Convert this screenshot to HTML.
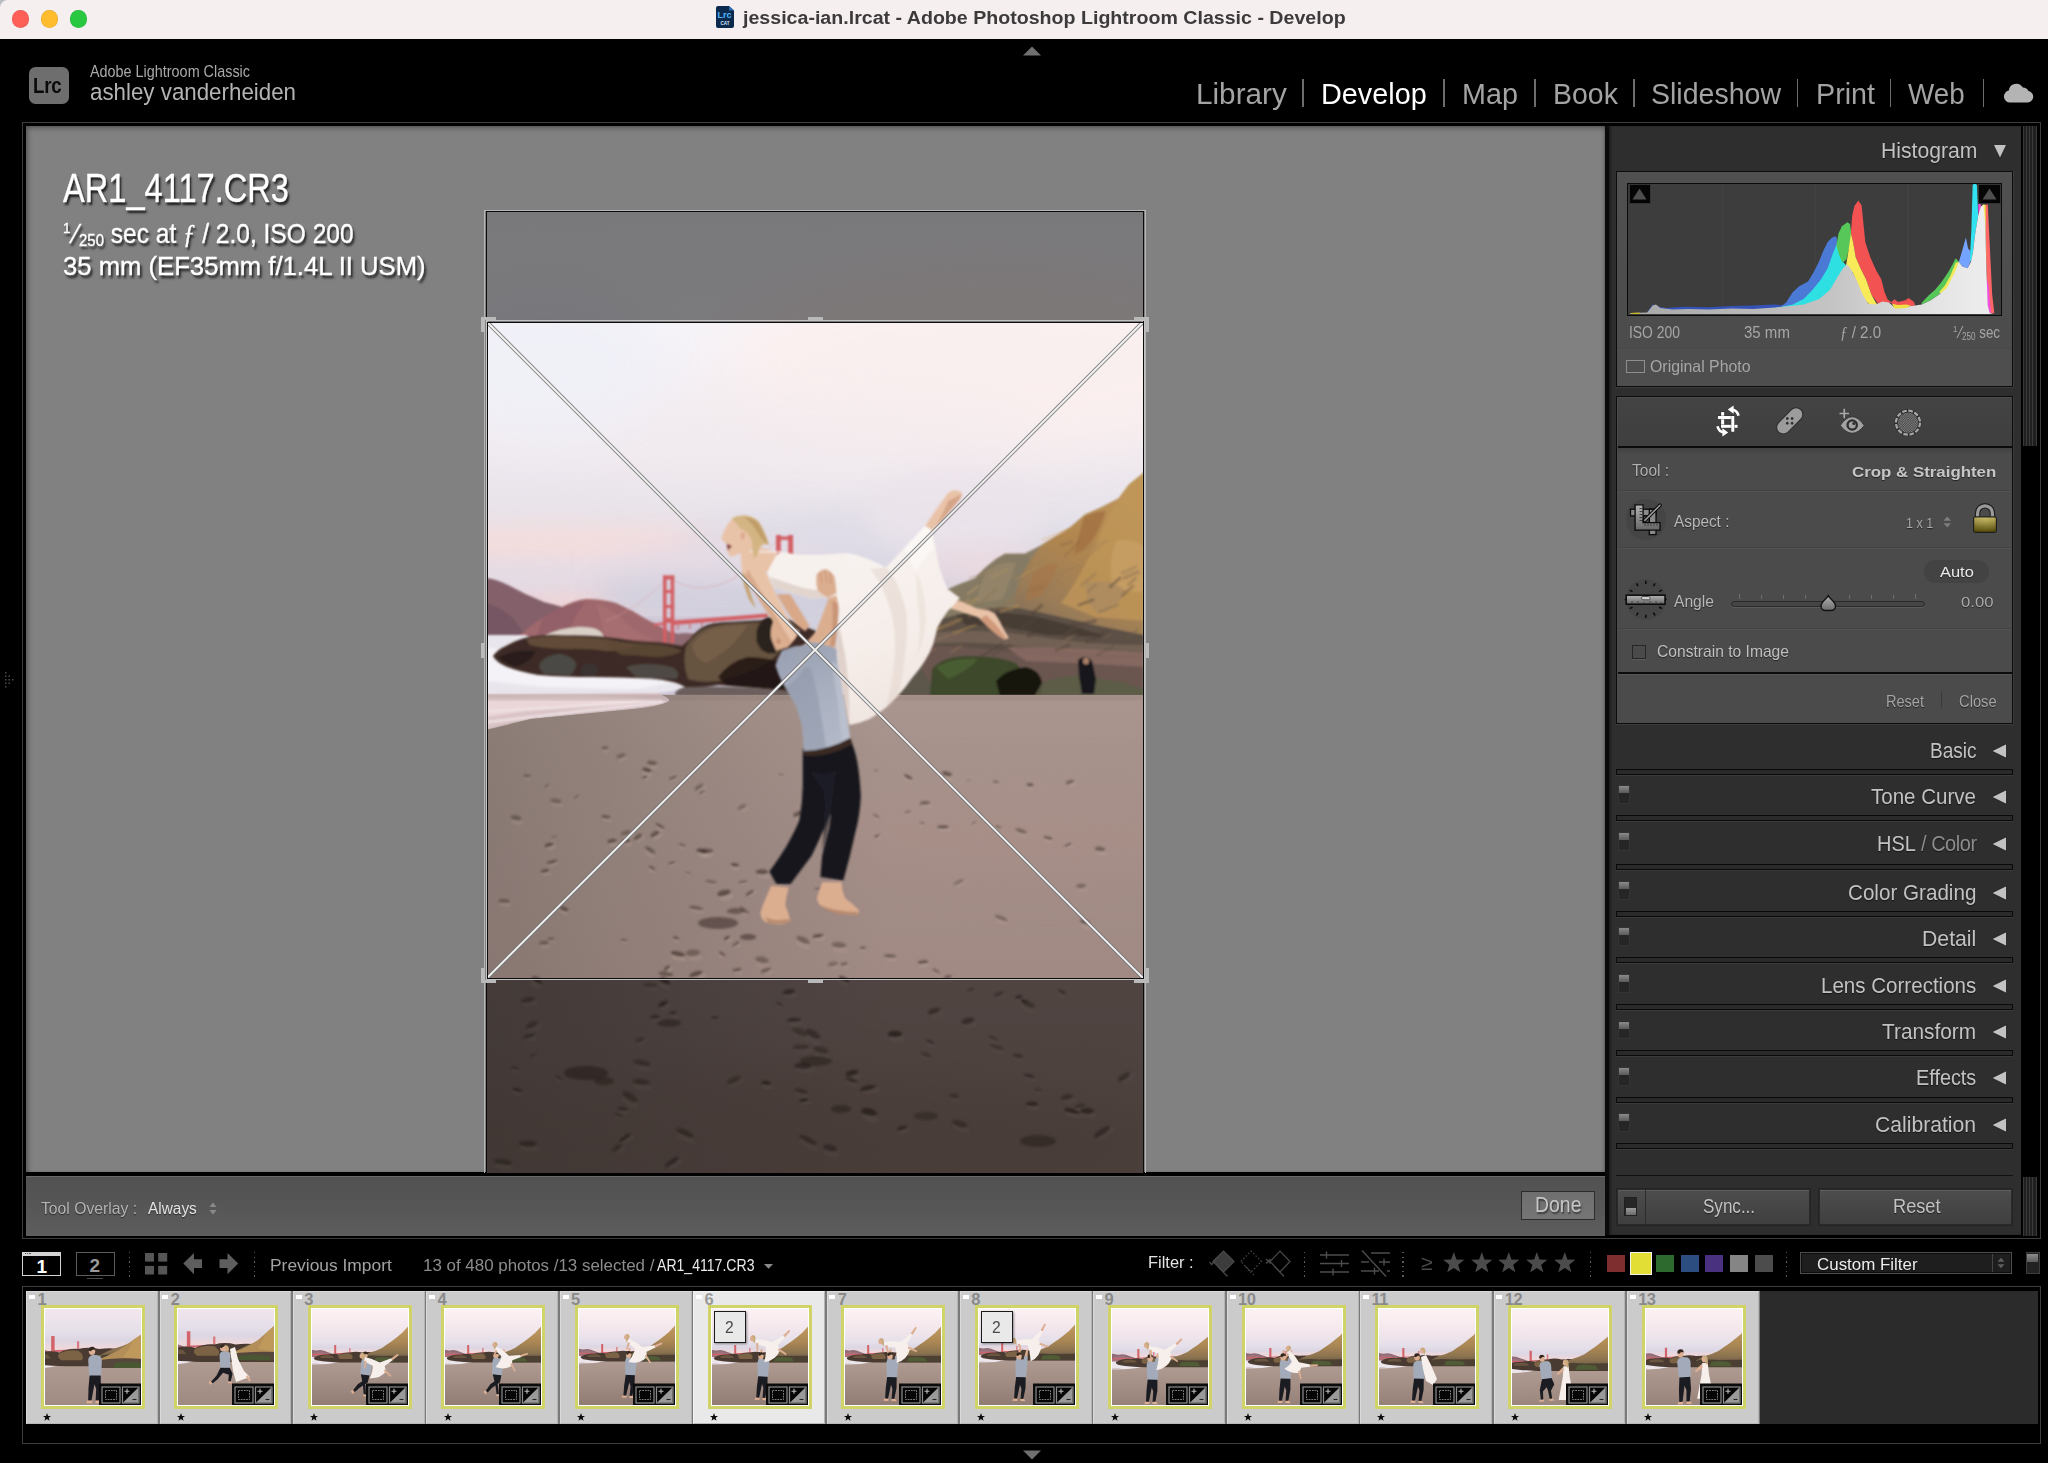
<!DOCTYPE html>
<html><head><meta charset="utf-8"><title>Lightroom Classic - Develop</title>
<style>
html,body{margin:0;padding:0;background:#000;}
#root{position:relative;width:2048px;height:1463px;overflow:hidden;background:#000;font-family:'Liberation Sans',sans-serif;}
.a{position:absolute;box-sizing:border-box;}
.t{position:absolute;white-space:pre;line-height:1;transform-origin:0 0;font-family:'Liberation Sans',sans-serif;}
svg{position:absolute;overflow:visible;}

</style></head>
<body>
<div id="root">
<!-- ===== Title bar ===== -->
<div class="a" style="left:0;top:0;width:2048px;height:39px;background:#f5eff0;"></div>
<div class="a" style="left:0;top:0;width:8px;height:8px;background:radial-gradient(circle at 8px 8px,#f5eff0 7.5px,#b9bcbf 8.5px);"></div>
<div class="a" style="left:11.7px;top:10.3px;width:17.4px;height:17.4px;border-radius:50%;background:#fe5f57;box-shadow:inset 0 0 0 .5px rgba(0,0,0,.12)"></div>
<div class="a" style="left:40.5px;top:10.3px;width:17.4px;height:17.4px;border-radius:50%;background:#febc2e;box-shadow:inset 0 0 0 .5px rgba(0,0,0,.12)"></div>
<div class="a" style="left:69.6px;top:10.3px;width:17.4px;height:17.4px;border-radius:50%;background:#28c840;box-shadow:inset 0 0 0 .5px rgba(0,0,0,.12)"></div>
<!-- catalog file icon -->
<svg style="left:716px;top:6px" width="18" height="22" viewBox="0 0 18 22"><path d="M2 0h11l5 4.5V20a2 2 0 0 1-2 2H2a2 2 0 0 1-2-2V2a2 2 0 0 1 2-2z" fill="#0b2a4d"/><path d="M13 0l5 4.500h-5z" fill="#2f6fb0"/><text x="1.600" y="11.500" font-family="Liberation Sans" font-weight="700" font-size="8.500" fill="#4fb4ff" textLength="14" lengthAdjust="spacingAndGlyphs">Lrc</text><text x="4.500" y="18.500" font-family="Liberation Sans" font-weight="700" font-size="4.500" fill="#d8ecff" textLength="9" lengthAdjust="spacingAndGlyphs">CAT</text></svg>

<!-- top collapse arrow -->
<svg style="left:1023px;top:45.500px" width="18" height="10" viewBox="0 0 18 10"><path d="M0 9.500L9 0.500L18 9.500z" fill="#707070"/></svg>
<!-- bottom collapse arrow -->
<svg style="left:1023px;top:1450px" width="18" height="10" viewBox="0 0 18 10"><path d="M0 0.500L9 9.500L18 0.500z" fill="#707070"/></svg>
<!-- left grip -->
<svg style="left:4px;top:671px" width="10" height="20" viewBox="0 0 10 20"><g fill="#4a4a4a"><rect x="1" y="1" width="1.500" height="1.500"/><rect x="1" y="4.500" width="1.500" height="1.500"/><rect x="1" y="8" width="1.500" height="1.500"/><rect x="1" y="11.500" width="1.500" height="1.500"/><rect x="1" y="15" width="1.500" height="1.500"/><rect x="4.500" y="4.500" width="1.500" height="1.500"/><rect x="4.500" y="8" width="1.500" height="1.500"/><rect x="4.500" y="11.500" width="1.500" height="1.500"/><rect x="8" y="8" width="1.500" height="1.500"/></g></svg>

<!-- Lrc logo -->
<div class="a" style="left:29px;top:66.800px;width:39.700px;height:37.700px;border-radius:6.500px;background:#6e6e6e;"></div>
<span class="t" style="left:33.200px;top:74.500px;font-size:22.500px;font-weight:700;color:#0a0a0a;transform:scaleX(.83);letter-spacing:-.3px">Lrc</span>

<!-- nav separators -->
<div class="a" style="left:1302.400px;top:79px;width:1.600px;height:27.500px;background:#6c6c6c"></div>
<div class="a" style="left:1443px;top:79px;width:1.600px;height:27.500px;background:#6c6c6c"></div>
<div class="a" style="left:1534.100px;top:79px;width:1.600px;height:27.500px;background:#6c6c6c"></div>
<div class="a" style="left:1633px;top:79px;width:1.600px;height:27.500px;background:#6c6c6c"></div>
<div class="a" style="left:1796.900px;top:79px;width:1.600px;height:27.500px;background:#6c6c6c"></div>
<div class="a" style="left:1889.700px;top:79px;width:1.600px;height:27.500px;background:#6c6c6c"></div>
<div class="a" style="left:1982.700px;top:79px;width:1.600px;height:27.500px;background:#6c6c6c"></div>
<!-- cloud -->
<svg style="left:2003px;top:83px" width="31" height="20" viewBox="0 0 31 20"><path d="M7 19.500a6 6 0 0 1-1.200-11.900A7.500 7.500 0 0 1 19.800 4.500 6.200 6.200 0 0 1 25.500 8a5.800 5.800 0 0 1-.8 11.500z" fill="#b4b4b4"/></svg>

<!-- ===== outer frame (upper) ===== -->
<div class="a" style="left:21.800px;top:121.600px;width:2019.200px;height:1117.400px;border:1.500px solid #3d3d3d;"></div>

<!-- ===== main view ===== -->
<div class="a" id="mainview" style="left:25.600px;top:125.700px;width:1579.700px;height:1046.800px;background:#818181;box-shadow:inset 3px 3px 5px -1px rgba(0,0,0,.35), inset -2px 0 3px -1px rgba(0,0,0,.25);"></div>

<!-- ===== toolbar ===== -->
<div class="a" style="left:25.600px;top:1175.800px;width:1579.700px;height:59.800px;background:linear-gradient(#525252,#565656 50%,#5d5d5d);border-top:1.500px solid #6a6a6a;"></div>
<!-- Always stepper -->
<svg style="left:208.500px;top:1202px" width="8" height="13" viewBox="0 0 8 13"><path d="M0.500 5L4 0.500L7.500 5zM0.500 8L4 12.500L7.500 8z" fill="#8a8a8a"/></svg>
<!-- Done button -->
<div class="a" style="left:1520.700px;top:1191.300px;width:74.300px;height:28.500px;background:linear-gradient(#6f6f6f,#757575);border:1.500px solid #2c2c2c;"></div>

<!-- ===== right panel ===== -->
<div class="a" style="left:1605.300px;top:125.700px;width:3.500px;height:1109.800px;background:#0a0a0a"></div>
<div class="a" style="left:1608.800px;top:125.700px;width:411.800px;height:1109.800px;background:#2e2e2e;box-shadow:inset 2px 0 2px rgba(0,0,0,.35);"></div>
<!-- scrollbar grip strips -->
<div class="a" style="left:2023.200px;top:126.300px;width:13.600px;height:320px;background:repeating-linear-gradient(90deg,#3a3a3a 0,#3a3a3a 1px,#202020 1px,#202020 3.150px);"></div>
<div class="a" style="left:2023.200px;top:1177px;width:13.600px;height:58.500px;background:repeating-linear-gradient(90deg,#3a3a3a 0,#3a3a3a 1px,#202020 1px,#202020 3.150px);"></div>

<!-- Histogram header triangle -->
<svg style="left:1992.500px;top:143.500px" width="14" height="15" viewBox="0 0 14 15"><path d="M0.300 0.500h13.400L7 14.500z" fill="#c2c2c2" stroke="#1c1c1c" stroke-width=".8"/></svg>

<!-- Histogram box -->
<div class="a" style="left:1616.300px;top:171.300px;width:397px;height:215.500px;background:linear-gradient(#505050,#4b4b4b);border:1.500px solid #0c0c0c;box-shadow:0 1px 0 #3c3c3c,1px 0 0 #3a3a3a;"></div>
<div class="a" style="left:1618px;top:347.500px;width:393.500px;height:1px;background:#484848"></div>
<div class="a" style="left:1618px;top:348.500px;width:393.500px;height:37px;background:#4e4e4e"></div>
<div class="a" id="histo" style="left:1627.300px;top:182.800px;width:374.600px;height:133.200px;background:#3d3d3d;border:1.500px solid #0a0a0a;overflow:hidden;"></div>
<!-- Original photo checkbox -->
<div class="a" style="left:1626px;top:360px;width:19px;height:12.800px;border:1.300px solid #8e8e8e;"></div>

<!-- Tool strip + tool panel box -->
<div class="a" style="left:1616.300px;top:396px;width:397px;height:328px;background:#4b4b4b;border:1.500px solid #0c0c0c;box-shadow:0 1px 0 #3c3c3c,1px 0 0 #3a3a3a;"></div>
<div class="a" style="left:1617.800px;top:397.500px;width:394px;height:48.500px;background:linear-gradient(#434343,#3f3f3f);"></div>
<div class="a" style="left:1617.800px;top:445.500px;width:394px;height:2px;background:#0c0c0c"></div>
<div class="a" style="left:1617.800px;top:447.500px;width:394px;height:6px;background:linear-gradient(#424242,#4b4b4b)"></div>
<!-- dividers -->
<div class="a" style="left:1617.800px;top:490px;width:394px;height:1px;background:#434343"></div><div class="a" style="left:1617.800px;top:491px;width:394px;height:1px;background:#525252"></div>
<div class="a" style="left:1617.800px;top:547.300px;width:394px;height:1px;background:#434343"></div><div class="a" style="left:1617.800px;top:548.300px;width:394px;height:1px;background:#525252"></div>
<div class="a" style="left:1617.800px;top:628px;width:394px;height:1px;background:#434343"></div><div class="a" style="left:1617.800px;top:629px;width:394px;height:1px;background:#525252"></div>
<div class="a" style="left:1617.800px;top:672.300px;width:394px;height:1.800px;background:#0c0c0c"></div><div class="a" style="left:1617.800px;top:674.100px;width:394px;height:1px;background:#555"></div>
<!-- icon circles -->
<div class="a" style="left:1625.500px;top:499.300px;width:40.500px;height:40.500px;border-radius:50%;background:#454545"></div>
<div class="a" style="left:1625.500px;top:579.300px;width:40.500px;height:40.500px;border-radius:50%;background:#454545"></div>
<!-- Auto pill -->
<div class="a" style="left:1923.700px;top:559.900px;width:65.800px;height:23.200px;border-radius:12px;background:#434343"></div>
<!-- constrain checkbox -->
<div class="a" style="left:1632px;top:644.600px;width:14px;height:14px;background:#4a4a4a;border:1.300px solid #262626;box-shadow:0 1px 0 #5a5a5a"></div>
<!-- reset|close sep -->
<div class="a" style="left:1940.800px;top:691px;width:1px;height:17px;background:#3a3a3a"></div>
<!-- aspect stepper -->
<svg style="left:1943px;top:516.300px" width="8.500" height="12" viewBox="0 0 8.500 12"><path d="M0.500 4.800L4.250 0.500L8 4.800zM0.500 7.200L4.250 11.500L8 7.200z" fill="#7e7e7e"/></svg>
<!-- slider -->
<div class="a" style="left:1730.600px;top:600.500px;width:194px;height:6px;border-radius:3px;background:#454545;border:1.200px solid #2a2a2a;box-shadow:0 1px 0 #5c5c5c"></div>
<div class="a" style="left:1738.9px;top:594px;width:1px;height:4.5px;background:#6e6e6e"></div>
<div class="a" style="left:1760.9px;top:595px;width:1px;height:3.5px;background:#6e6e6e"></div>
<div class="a" style="left:1782.8px;top:595px;width:1px;height:3.5px;background:#6e6e6e"></div>
<div class="a" style="left:1804.8px;top:595px;width:1px;height:3.5px;background:#6e6e6e"></div>
<div class="a" style="left:1848.8px;top:595px;width:1px;height:3.5px;background:#6e6e6e"></div>
<div class="a" style="left:1870.7px;top:595px;width:1px;height:3.5px;background:#6e6e6e"></div>
<div class="a" style="left:1892.7px;top:595px;width:1px;height:3.5px;background:#6e6e6e"></div>
<div class="a" style="left:1914.7px;top:594px;width:1px;height:4.5px;background:#6e6e6e"></div>
<svg style="left:1820px;top:594.500px" width="16.500" height="16.500" viewBox="0 0 16.500 16.500"><defs><linearGradient id="hg" x1="0" y1="0" x2="0" y2="1"><stop offset="0" stop-color="#b0b0b0"/><stop offset="1" stop-color="#6c6c6c"/></linearGradient></defs><path d="M8.250 0.800C9.500 3.800 15.500 6.500 15.500 11a4.500 4.500 0 0 1-4.500 4.500h-5.500A4.500 4.500 0 0 1 1 11C1 6.500 7 3.800 8.250 0.800z" fill="url(#hg)" stroke="#111" stroke-width="1.400"/></svg>
<div class="a" style="left:1616.300px;top:1174.500px;width:397px;height:1.200px;background:#111"></div>
<div class="a" style="left:1617px;top:1188.600px;width:193px;height:36.800px;background:linear-gradient(#4d4d4d,#3f3f3f);border:1px solid #2a2a2a;box-shadow:inset 0 1px 0 #5e5e5e,0 0 0 1px #242424;"></div>
<div class="a" style="left:1644.500px;top:1189.600px;width:1.500px;height:34.800px;background:#2c2c2c;"></div>
<div class="a" style="left:1624px;top:1196.500px;width:13px;height:19.500px;background:#262626;border:1px solid #202020;"></div>
<div class="a" style="left:1625.500px;top:1207.500px;width:10px;height:7px;background:linear-gradient(#9a9a9a,#6a6a6a);"></div>
<div class="a" style="left:1818.800px;top:1188.600px;width:193px;height:36.800px;background:linear-gradient(#4d4d4d,#3f3f3f);border:1px solid #2a2a2a;box-shadow:inset 0 1px 0 #5e5e5e,0 0 0 1px #242424;"></div>

<div class="a" style="left:1616.300px;top:768.6px;width:397px;height:6px;background:#2a2a2a;border:1.500px solid #0a0a0a;box-shadow:0 1px 0 #3a3a3a"></div>
<div class="a" style="left:1616.300px;top:815.2px;width:397px;height:6px;background:#2a2a2a;border:1.500px solid #0a0a0a;box-shadow:0 1px 0 #3a3a3a"></div>
<div class="a" style="left:1616.300px;top:864.4px;width:397px;height:6px;background:#2a2a2a;border:1.500px solid #0a0a0a;box-shadow:0 1px 0 #3a3a3a"></div>
<div class="a" style="left:1616.300px;top:911.0px;width:397px;height:6px;background:#2a2a2a;border:1.500px solid #0a0a0a;box-shadow:0 1px 0 #3a3a3a"></div>
<div class="a" style="left:1616.300px;top:957.4px;width:397px;height:6px;background:#2a2a2a;border:1.500px solid #0a0a0a;box-shadow:0 1px 0 #3a3a3a"></div>
<div class="a" style="left:1616.300px;top:1003.9px;width:397px;height:6px;background:#2a2a2a;border:1.500px solid #0a0a0a;box-shadow:0 1px 0 #3a3a3a"></div>
<div class="a" style="left:1616.300px;top:1050.3px;width:397px;height:6px;background:#2a2a2a;border:1.500px solid #0a0a0a;box-shadow:0 1px 0 #3a3a3a"></div>
<div class="a" style="left:1616.300px;top:1096.7px;width:397px;height:6px;background:#2a2a2a;border:1.500px solid #0a0a0a;box-shadow:0 1px 0 #3a3a3a"></div>
<div class="a" style="left:1616.300px;top:1142.9px;width:397px;height:6px;background:#2a2a2a;border:1.500px solid #0a0a0a;box-shadow:0 1px 0 #3a3a3a"></div>
<svg style="left:1991px;top:743.1px" width="16" height="16" viewBox="0 0 16 16"><path d="M15.500 0.700V15.300L0.700 8z" fill="#c2c2c2" stroke="#1c1c1c" stroke-width=".8"/></svg>
<svg style="left:1991px;top:788.6px" width="16" height="16" viewBox="0 0 16 16"><path d="M15.500 0.700V15.300L0.700 8z" fill="#c2c2c2" stroke="#1c1c1c" stroke-width=".8"/></svg>
<div class="a" style="left:1617.500px;top:785.0px;width:12.500px;height:19px;background:#262626;border:1px solid #343434;"></div>
<div class="a" style="left:1618.800px;top:786.2px;width:10px;height:7px;background:linear-gradient(#8a8a8a,#5a5a5a);"></div>
<svg style="left:1991px;top:835.5px" width="16" height="16" viewBox="0 0 16 16"><path d="M15.500 0.700V15.300L0.700 8z" fill="#c2c2c2" stroke="#1c1c1c" stroke-width=".8"/></svg>
<div class="a" style="left:1617.500px;top:831.9px;width:12.500px;height:19px;background:#262626;border:1px solid #343434;"></div>
<div class="a" style="left:1618.800px;top:833.1px;width:10px;height:7px;background:linear-gradient(#8a8a8a,#5a5a5a);"></div>
<svg style="left:1991px;top:884.6px" width="16" height="16" viewBox="0 0 16 16"><path d="M15.500 0.700V15.300L0.700 8z" fill="#c2c2c2" stroke="#1c1c1c" stroke-width=".8"/></svg>
<div class="a" style="left:1617.500px;top:881.0px;width:12.500px;height:19px;background:#262626;border:1px solid #343434;"></div>
<div class="a" style="left:1618.800px;top:882.2px;width:10px;height:7px;background:linear-gradient(#8a8a8a,#5a5a5a);"></div>
<svg style="left:1991px;top:930.8px" width="16" height="16" viewBox="0 0 16 16"><path d="M15.500 0.700V15.300L0.700 8z" fill="#c2c2c2" stroke="#1c1c1c" stroke-width=".8"/></svg>
<div class="a" style="left:1617.500px;top:927.2px;width:12.500px;height:19px;background:#262626;border:1px solid #343434;"></div>
<div class="a" style="left:1618.800px;top:928.4px;width:10px;height:7px;background:linear-gradient(#8a8a8a,#5a5a5a);"></div>
<svg style="left:1991px;top:977.5px" width="16" height="16" viewBox="0 0 16 16"><path d="M15.500 0.700V15.300L0.700 8z" fill="#c2c2c2" stroke="#1c1c1c" stroke-width=".8"/></svg>
<div class="a" style="left:1617.500px;top:973.9px;width:12.500px;height:19px;background:#262626;border:1px solid #343434;"></div>
<div class="a" style="left:1618.800px;top:975.1px;width:10px;height:7px;background:linear-gradient(#8a8a8a,#5a5a5a);"></div>
<svg style="left:1991px;top:1024.0px" width="16" height="16" viewBox="0 0 16 16"><path d="M15.500 0.700V15.300L0.700 8z" fill="#c2c2c2" stroke="#1c1c1c" stroke-width=".8"/></svg>
<div class="a" style="left:1617.500px;top:1020.4px;width:12.500px;height:19px;background:#262626;border:1px solid #343434;"></div>
<div class="a" style="left:1618.800px;top:1021.6px;width:10px;height:7px;background:linear-gradient(#8a8a8a,#5a5a5a);"></div>
<svg style="left:1991px;top:1070.3px" width="16" height="16" viewBox="0 0 16 16"><path d="M15.500 0.700V15.300L0.700 8z" fill="#c2c2c2" stroke="#1c1c1c" stroke-width=".8"/></svg>
<div class="a" style="left:1617.500px;top:1066.7px;width:12.500px;height:19px;background:#262626;border:1px solid #343434;"></div>
<div class="a" style="left:1618.800px;top:1067.9px;width:10px;height:7px;background:linear-gradient(#8a8a8a,#5a5a5a);"></div>
<svg style="left:1991px;top:1116.6px" width="16" height="16" viewBox="0 0 16 16"><path d="M15.500 0.700V15.300L0.700 8z" fill="#c2c2c2" stroke="#1c1c1c" stroke-width=".8"/></svg>
<div class="a" style="left:1617.500px;top:1113.0px;width:12.500px;height:19px;background:#262626;border:1px solid #343434;"></div>
<div class="a" style="left:1618.800px;top:1114.2px;width:10px;height:7px;background:linear-gradient(#8a8a8a,#5a5a5a);"></div>

<svg id="photo" style="left:486px;top:211px;overflow:hidden" width="658" height="961.500" viewBox="0 0 658 961.500">
<defs>
<linearGradient id="sky" gradientUnits="userSpaceOnUse" x1="0" y1="0" x2="0" y2="485">
<stop offset="0" stop-color="#f3f2f8"/><stop offset=".23" stop-color="#f6f4f8"/><stop offset=".42" stop-color="#f3edf1"/><stop offset=".6" stop-color="#e9e4eb"/><stop offset=".74" stop-color="#e0dde7"/><stop offset=".86" stop-color="#d5d2de"/><stop offset="1" stop-color="#cac4d3"/></linearGradient>
<linearGradient id="sand" gradientUnits="userSpaceOnUse" x1="0" y1="480" x2="0" y2="990">
<stop offset="0" stop-color="#aa968f"/><stop offset=".12" stop-color="#a6928b"/><stop offset=".35" stop-color="#a38d87"/><stop offset=".6" stop-color="#a08983"/><stop offset="1" stop-color="#977f78"/></linearGradient>
<linearGradient id="cliff" gradientUnits="userSpaceOnUse" x1="640" y1="270" x2="520" y2="470">
<stop offset="0" stop-color="#c0965a"/><stop offset=".35" stop-color="#b0864f"/><stop offset=".6" stop-color="#9a7c58"/><stop offset=".8" stop-color="#7d6c5c"/><stop offset="1" stop-color="#5f5448"/></linearGradient>
<linearGradient id="dress" gradientUnits="userSpaceOnUse" x1="350" y1="340" x2="420" y2="520">
<stop offset="0" stop-color="#f8f3f0"/><stop offset=".5" stop-color="#f6eeea"/><stop offset="1" stop-color="#efe3de"/></linearGradient>
<linearGradient id="shirt" gradientUnits="userSpaceOnUse" x1="300" y1="440" x2="350" y2="540">
<stop offset="0" stop-color="#9aa1b2"/><stop offset=".5" stop-color="#a9b0c0"/><stop offset="1" stop-color="#b3b9c8"/></linearGradient>
<linearGradient id="lsh" gradientUnits="userSpaceOnUse" x1="0" y1="0" x2="400" y2="0"><stop offset="0" stop-color="#6f645f" stop-opacity=".5"/><stop offset=".45" stop-color="#6f645f" stop-opacity=".28"/><stop offset="1" stop-color="#6f645f" stop-opacity="0"/></linearGradient>
<filter id="b1" x="-5%" y="-5%" width="110%" height="110%"><feGaussianBlur stdDeviation="1"/></filter>
<filter id="b2" x="-10%" y="-10%" width="120%" height="120%"><feGaussianBlur stdDeviation="2.200"/></filter>
<filter id="b5" x="-20%" y="-20%" width="140%" height="140%"><feGaussianBlur stdDeviation="6"/></filter>
<filter id="b14" x="-60%" y="-100%" width="220%" height="300%"><feGaussianBlur stdDeviation="14"/></filter>
<filter id="b25" x="-100%" y="-100%" width="300%" height="300%"><feGaussianBlur stdDeviation="26"/></filter>
</defs>
<rect x="0" y="0" width="658" height="490" fill="url(#sky)"/>
<g>
<ellipse cx="500" cy="150" rx="260" ry="95" fill="#fcefee" opacity=".8" filter="url(#b25)"/>
<ellipse cx="330" cy="225" rx="230" ry="45" fill="#f3ebee" opacity=".6" filter="url(#b25)"/>
<ellipse cx="60" cy="150" rx="120" ry="80" fill="#f0f0f8" opacity=".9" filter="url(#b25)"/>
<ellipse cx="70" cy="335" rx="190" ry="20" fill="#f8dcd9" opacity=".9" filter="url(#b14)"/>
<ellipse cx="110" cy="395" rx="170" ry="16" fill="#f5d3d3" opacity=".95" filter="url(#b14)"/>
<ellipse cx="40" cy="362" rx="120" ry="12" fill="#e4dbe6" opacity=".8" filter="url(#b14)"/>
<ellipse cx="340" cy="385" rx="230" ry="48" fill="#d2d0de" opacity=".95" filter="url(#b14)"/>
<ellipse cx="400" cy="330" rx="200" ry="30" fill="#dedbe6" opacity=".8" filter="url(#b14)"/>
<ellipse cx="230" cy="350" rx="120" ry="18" fill="#e9dde6" opacity=".7" filter="url(#b14)"/>
<ellipse cx="470" cy="300" rx="90" ry="45" fill="#ece4eb" opacity=".8" filter="url(#b14)"/>
<ellipse cx="500" cy="355" rx="70" ry="16" fill="#f1d9de" opacity=".8" filter="url(#b14)"/>
<ellipse cx="180" cy="418" rx="130" ry="9" fill="#c4b8cc" opacity=".8" filter="url(#b5)"/>
</g>
<g filter="url(#b1)">
<path d="M0 367Q10 368 22 374Q40 384 58 391Q70 394 80 397L96 402L120 430H0z" fill="#84616a"/>
<path d="M0 392Q14 396 26 406Q34 416 40 426L0 428z" fill="#765762"/>
<path d="M34 424Q52 408 72 398Q88 389 100 388Q116 388 130 392Q146 399 160 408Q172 414 182 420Q196 424 214 430L214 440H34z" fill="#9f676c"/>
<path d="M58 404Q84 392 100 390Q92 400 84 416Q70 420 50 428z" fill="#8e5c66" opacity=".7"/>
<path d="M110 392Q128 398 140 412Q150 422 170 428L120 430z" fill="#ac7472" opacity=".55"/>
<path d="M186 424Q206 418 226 430L226 440H186z" fill="#8e6a72"/>
<path d="M60 424Q74 417 92 416Q110 415 116 422L118 428H60z" fill="#d8cfc6"/>
</g>
<g filter="url(#b1)" fill="#d25e63">
<path d="M150 417Q200 330 181 366" fill="none"/>
<path d="M182.500 366Q230 400 290 330" fill="none" stroke="#dba0a8" stroke-width="1" opacity=".6"/>
<path d="M182.500 366Q150 400 120 410" fill="none" stroke="#dba0a8" stroke-width="1" opacity=".5"/>
<rect x="177" y="364.500" width="3.600" height="68"/><rect x="184.600" y="364.500" width="3.600" height="68"/>
<rect x="177" y="364.500" width="11.200" height="4"/><rect x="177" y="379" width="11.200" height="3"/><rect x="177" y="394" width="11.200" height="3"/><rect x="177" y="407" width="11.200" height="5"/>
<path d="M188 409.500L250 405L282 402.500V406.500L250 409L188 414z"/>
<path d="M177 411L168 412.500L168 415.500L177 414.500z" opacity=".8"/>
<path d="M192 414v5M204 413v5M216 412v4M228 411v4" stroke="#c0686c" stroke-width="1.200"/>
<rect x="290" y="324" width="4.800" height="22"/><rect x="302.200" y="324" width="4.800" height="22"/><path d="M290 324Q298.500 327 307 324V330Q298.500 327.500 290 330z"/>
</g>
<g filter="url(#b1)">
<path d="M0 424H40L60 440L120 452L190 466Q204 470 200 476Q190 481 170 482L96 483L0 484z" fill="#e9e5ec"/>
<path d="M0 436Q30 440 50 452Q90 462 140 466L186 472L150 478L60 476L0 470z" fill="#f4f2f6"/>
<path d="M0 483L96 482.500L172 482Q186 488 182 491Q170 496 148 498L96 503L45 508L0 519z" fill="#d9c3c6"/>
<path d="M0 486L100 485Q150 486 170 489Q150 494 100 496L40 500L0 506z" fill="#ead6d8"/>
<path d="M0 500Q60 498 110 493Q150 490 176 489" fill="none" stroke="#f1e7ea" stroke-width="2" opacity=".8"/>
<path d="M0 511Q50 506 96 500Q140 496 178 491" fill="none" stroke="#efe4e7" stroke-width="2.500" opacity=".9"/>
<path d="M0 519L45 508L96 503L148 498Q170 496 182 491L184 493Q160 501 100 507L40 514L0 524z" fill="#bfa6a4" opacity=".7"/>
</g>
<g filter="url(#b1)">
<path d="M7 445Q12 438 20 435Q30 429 42 426Q60 423 80 424.500Q98 424 114 425.500Q132 427 148 430Q162 431 174 431.500Q186 433 196 435Q200 432 204 428Q210 419 220 414.500Q230 411 242 411Q256 410 268 409.500L300 408L330 420L330 482L293 479.500Q260 476 233 474Q214 477 199 476Q192 472 187 471Q176 468 165 467.500Q136 466 107 466Q78 466 52 464Q34 461 20 455.500Q10 451 7 445z" fill="#3d2c25"/>
<path d="M40 428Q60 424 84 426Q104 426 120 428Q136 431 150 434Q140 440 120 440Q100 437 84 438Q60 438 44 434z" fill="#66503a" opacity=".9"/>
<path d="M120 430Q150 432 176 434Q190 436 196 440Q186 446 168 446Q150 444 136 444Q124 438 120 430z" fill="#5e4a36" opacity=".85"/>
<path d="M200 436Q206 424 220 417Q236 412 256 412Q270 411 284 412L300 430Q290 450 270 458Q250 466 232 470Q214 472 202 468Q196 452 200 436z" fill="#665240"/>
<path d="M206 434Q214 422 228 417Q244 414 262 414Q254 426 244 436Q232 446 220 452Q208 448 206 434z" fill="#7a634b" opacity=".8"/>
<path d="M232 466Q244 450 262 446Q280 446 296 452L300 478L240 474z" fill="#1f1512" opacity=".85"/>
<path d="M54 452Q60 444 74 443Q86 445 90 452Q90 460 84 464L58 463Q52 458 54 452z" fill="#4c4a44"/>
<path d="M94 458Q98 452 106 452Q112 454 112 460L110 465H96z" fill="#3a3230"/>
<path d="M140 456Q160 450 186 456Q196 462 190 468L150 466z" fill="#55504c" opacity=".8"/>
<path d="M12 446Q30 438 50 440Q44 452 30 456Q18 452 12 446z" fill="#2c1f1b"/>
<path d="M199 476Q240 474 293 479.500L330 482V486L190 485Q186 480 199 476z" fill="#54463f" opacity=".8"/>
</g>
<g filter="url(#b1)">
<path d="M658 261L656.500 262.800L643 273.500L632.500 287.600L615 296.500L599 303.600L584.600 316L570 325L556 333.800L538.400 342.700L519 342.700L510 348L499 357L488.600 367.600L474 373L462 378.300L440 388L420 398L400 408L380 420L360 440L360 486L658 486z" fill="#8b7f68"/>
<path d="M658 261L656.500 262.800L643 273.500L632.500 287.600L615 296.500L599 303.600L584.600 316L570 325L556 333.800L545 348Q536 362 530 378L527 396Q560 402 609 414L658 424z" fill="url(#cliff)"/>
<path d="M658 261L656.500 262.800L643 273.500L632.500 287.600L622 306Q612 330 600 352Q590 372 575 392L609 406L658 410z" fill="#bf9659" opacity=".8"/>
<path d="M598 306Q610 300 620 300Q614 318 606 330Q598 340 588 344Q592 326 598 306z" fill="#a06c40" opacity=".7"/>
<path d="M548 362Q560 352 572 352Q566 372 556 384L540 390Q542 374 548 362z" fill="#a67448" opacity=".6"/>
<path d="M630 330Q646 326 658 336V380Q640 384 626 372Q622 350 630 330z" fill="#c9a268" opacity=".65"/>
<path d="M600 372Q624 366 640 380Q632 398 612 402Q598 392 600 372z" fill="#a98a62" opacity=".7"/>
<path d="M462 378.300L474 373L488.600 367.600L499 357L510 348L519 342.700L538.400 342.700L545 348Q536 362 530 378L527 396Q500 396 470 404L440 412L420 416L400 420L420 398L440 388z" fill="#857a64"/>
<path d="M500 360Q516 350 530 352Q524 372 516 388L490 392Q494 374 500 360z" fill="#96876a" opacity=".8"/>
<path d="M400 420L440 412L470 404Q500 396 527 396Q560 402 609 414L658 424V452L400 452z" fill="#5b4f45"/>
<path d="M470 404Q520 398 560 408Q600 418 620 426L560 424Q520 414 480 414z" fill="#40362f" opacity=".75"/>
<path d="M430 424Q480 416 540 424Q600 434 658 434V444Q600 444 540 436Q480 428 430 434z" fill="#7c6a5c" opacity=".7"/>
<path d="M380 440Q440 430 520 440Q600 450 658 446V486H360z" fill="#6a5650"/>
<path d="M520 436Q580 436 658 442V456Q600 452 540 450z" fill="#8c6c64" opacity=".8"/>
<path d="M380 452Q400 446 430 450L452 484H372z" fill="#5c564c"/>
<path d="M446 458Q456 446 480 445Q510 444 530 452Q540 462 538 476L536 485L444 485z" fill="#3e492c"/>
<path d="M450 456Q468 446 492 448Q482 460 462 468z" fill="#546a36" opacity=".6"/>
<path d="M510 470Q520 458 540 456Q552 458 556 470L556 485H514z" fill="#19130f"/>
<path d="M556 472Q580 462 604 466L640 472L658 478V486H548z" fill="#5b5d46" opacity=".9"/>
<path d="M592 449Q596 445.500 600 446Q606 447 607 454L610 468L608 483H596L593 466z" fill="#15141a"/>
<ellipse cx="600" cy="450" rx="3" ry="3.600" fill="#a88068"/>
</g>
<path d="M0 519L45 508L96 503L148 498Q170 496 182 491Q186 488 176 484L330 484L658 484V962H0z" fill="url(#sand)"/>
<rect x="0" y="484" width="658" height="5" fill="#8d776f" opacity=".35" filter="url(#b2)"/>
<ellipse cx="540" cy="620" rx="200" ry="45" fill="#ad9189" opacity=".4" filter="url(#b25)"/>
<path d="M0 519L45 508L96 503L148 498Q170 496 182 491Q186 488 176 484L330 484L400 484V962H0z" fill="url(#lsh)"/>
<ellipse cx="300" cy="930" rx="380" ry="70" fill="#7e655c" opacity=".25" filter="url(#b25)"/>
<g filter="url(#b1)"><ellipse cx="42" cy="568" rx="3.8" ry="1.2" transform="rotate(6 41 565)" fill="#c4b0a4" opacity="0.16"/><ellipse cx="62" cy="577" rx="2.6" ry="0.7" transform="rotate(-29 61 575)" fill="#c4b0a4" opacity="0.24"/><ellipse cx="72" cy="594" rx="6.0" ry="2.1" transform="rotate(8 70 590)" fill="#c4b0a4" opacity="0.16"/><ellipse cx="92" cy="588" rx="3.0" ry="0.8" transform="rotate(-33 91 586)" fill="#c4b0a4" opacity="0.20"/><ellipse cx="122" cy="609" rx="4.9" ry="1.6" transform="rotate(11 120 606)" fill="#c4b0a4" opacity="0.20"/><ellipse cx="142" cy="625" rx="5.9" ry="2.1" transform="rotate(-13 140 622)" fill="#c4b0a4" opacity="0.17"/><ellipse cx="142" cy="634" rx="4.2" ry="1.6" transform="rotate(-8 140 630)" fill="#c4b0a4" opacity="0.26"/><ellipse cx="166" cy="643" rx="6.4" ry="2.0" transform="rotate(34 164 639)" fill="#c4b0a4" opacity="0.19"/><ellipse cx="187" cy="654" rx="3.8" ry="0.9" transform="rotate(-12 186 652)" fill="#c4b0a4" opacity="0.27"/><ellipse cx="203" cy="664" rx="3.1" ry="0.8" transform="rotate(21 202 662)" fill="#c4b0a4" opacity="0.16"/><ellipse cx="227" cy="674" rx="6.1" ry="1.5" transform="rotate(10 225 671)" fill="#c4b0a4" opacity="0.15"/><ellipse cx="240" cy="687" rx="7.3" ry="2.7" transform="rotate(-14 238 682)" fill="#c4b0a4" opacity="0.25"/><ellipse cx="259" cy="703" rx="6.0" ry="1.5" transform="rotate(34 258 699)" fill="#c4b0a4" opacity="0.16"/><ellipse cx="285" cy="708" rx="4.4" ry="1.1" transform="rotate(-29 284 705)" fill="#c4b0a4" opacity="0.21"/><ellipse cx="120" cy="540" rx="3.5" ry="1.4" transform="rotate(-1 119 537)" fill="#c4b0a4" opacity="0.21"/><ellipse cx="136" cy="549" rx="5.2" ry="1.9" transform="rotate(-18 135 545)" fill="#c4b0a4" opacity="0.16"/><ellipse cx="168" cy="556" rx="5.4" ry="2.1" transform="rotate(7 166 552)" fill="#c4b0a4" opacity="0.19"/><ellipse cx="160" cy="569" rx="3.0" ry="1.1" transform="rotate(-17 159 566)" fill="#c4b0a4" opacity="0.25"/><ellipse cx="188" cy="569" rx="4.8" ry="1.2" transform="rotate(-19 187 567)" fill="#c4b0a4" opacity="0.21"/><ellipse cx="215" cy="580" rx="5.6" ry="1.5" transform="rotate(-34 213 576)" fill="#c4b0a4" opacity="0.17"/><ellipse cx="217" cy="584" rx="3.6" ry="1.2" transform="rotate(-26 216 581)" fill="#c4b0a4" opacity="0.18"/><ellipse cx="258" cy="600" rx="5.0" ry="1.7" transform="rotate(-25 256 596)" fill="#c4b0a4" opacity="0.14"/><ellipse cx="212" cy="700" rx="7.5" ry="1.7" transform="rotate(10 210 697)" fill="#c4b0a4" opacity="0.20"/><ellipse cx="191" cy="730" rx="3.4" ry="1.1" transform="rotate(17 190 727)" fill="#c4b0a4" opacity="0.26"/><ellipse cx="194" cy="747" rx="7.9" ry="2.3" transform="rotate(13 192 743)" fill="#c4b0a4" opacity="0.26"/><ellipse cx="182" cy="768" rx="7.9" ry="2.6" transform="rotate(9 180 763)" fill="#c4b0a4" opacity="0.19"/><ellipse cx="181" cy="775" rx="6.8" ry="2.8" transform="rotate(27 179 770)" fill="#c4b0a4" opacity="0.23"/><ellipse cx="178" cy="797" rx="5.9" ry="2.2" transform="rotate(-29 177 793)" fill="#c4b0a4" opacity="0.24"/><ellipse cx="171" cy="809" rx="4.8" ry="1.7" transform="rotate(-0 169 806)" fill="#c4b0a4" opacity="0.22"/><ellipse cx="155" cy="832" rx="5.4" ry="1.9" transform="rotate(-21 154 829)" fill="#c4b0a4" opacity="0.16"/><ellipse cx="159" cy="857" rx="9.2" ry="2.7" transform="rotate(12 156 852)" fill="#c4b0a4" opacity="0.16"/><ellipse cx="157" cy="876" rx="9.4" ry="2.8" transform="rotate(6 155 871)" fill="#c4b0a4" opacity="0.18"/><ellipse cx="147" cy="891" rx="9.4" ry="3.4" transform="rotate(32 144 886)" fill="#c4b0a4" opacity="0.17"/><ellipse cx="139" cy="901" rx="5.4" ry="1.6" transform="rotate(9 137 898)" fill="#c4b0a4" opacity="0.20"/><ellipse cx="141" cy="930" rx="7.2" ry="1.7" transform="rotate(-33 139 927)" fill="#c4b0a4" opacity="0.25"/><ellipse cx="133" cy="941" rx="6.3" ry="2.3" transform="rotate(-34 131 937)" fill="#c4b0a4" opacity="0.15"/><ellipse cx="251" cy="736" rx="4.3" ry="1.1" transform="rotate(-32 250 733)" fill="#c4b0a4" opacity="0.22"/><ellipse cx="278" cy="754" rx="7.4" ry="3.0" transform="rotate(13 276 749)" fill="#c4b0a4" opacity="0.16"/><ellipse cx="282" cy="763" rx="5.7" ry="2.1" transform="rotate(-22 280 759)" fill="#c4b0a4" opacity="0.17"/><ellipse cx="305" cy="785" rx="6.7" ry="2.5" transform="rotate(-7 303 781)" fill="#c4b0a4" opacity="0.24"/><ellipse cx="310" cy="813" rx="7.7" ry="1.9" transform="rotate(-3 308 809)" fill="#c4b0a4" opacity="0.22"/><ellipse cx="330" cy="828" rx="8.8" ry="3.3" transform="rotate(31 327 823)" fill="#c4b0a4" opacity="0.20"/><ellipse cx="338" cy="844" rx="8.6" ry="3.0" transform="rotate(15 335 839)" fill="#c4b0a4" opacity="0.16"/><ellipse cx="368" cy="867" rx="7.1" ry="2.6" transform="rotate(-13 366 862)" fill="#c4b0a4" opacity="0.26"/><ellipse cx="368" cy="873" rx="6.6" ry="2.2" transform="rotate(19 366 869)" fill="#c4b0a4" opacity="0.20"/><ellipse cx="385" cy="881" rx="9.0" ry="2.3" transform="rotate(-12 382 877)" fill="#c4b0a4" opacity="0.24"/><ellipse cx="386" cy="907" rx="8.8" ry="3.3" transform="rotate(13 383 901)" fill="#c4b0a4" opacity="0.26"/><ellipse cx="417" cy="921" rx="5.6" ry="1.8" transform="rotate(-15 416 917)" fill="#c4b0a4" opacity="0.23"/><ellipse cx="334" cy="728" rx="5.8" ry="1.7" transform="rotate(-8 332 725)" fill="#c4b0a4" opacity="0.25"/><ellipse cx="355" cy="739" rx="8.0" ry="2.6" transform="rotate(5 353 734)" fill="#c4b0a4" opacity="0.16"/><ellipse cx="377" cy="740" rx="3.2" ry="1.3" transform="rotate(1 377 737)" fill="#c4b0a4" opacity="0.19"/><ellipse cx="406" cy="749" rx="6.7" ry="1.6" transform="rotate(3 404 745)" fill="#c4b0a4" opacity="0.19"/><ellipse cx="438" cy="755" rx="5.7" ry="1.4" transform="rotate(-5 437 751)" fill="#c4b0a4" opacity="0.25"/><ellipse cx="451" cy="763" rx="4.2" ry="1.4" transform="rotate(30 450 760)" fill="#c4b0a4" opacity="0.15"/><ellipse cx="464" cy="769" rx="4.5" ry="1.6" transform="rotate(-12 462 766)" fill="#c4b0a4" opacity="0.18"/><ellipse cx="486" cy="782" rx="4.0" ry="1.3" transform="rotate(-17 485 779)" fill="#c4b0a4" opacity="0.16"/><ellipse cx="515" cy="786" rx="5.6" ry="1.8" transform="rotate(-24 513 783)" fill="#c4b0a4" opacity="0.16"/><ellipse cx="544" cy="798" rx="8.2" ry="2.8" transform="rotate(25 542 793)" fill="#c4b0a4" opacity="0.17"/><ellipse cx="391" cy="608" rx="3.6" ry="1.0" transform="rotate(30 390 605)" fill="#c4b0a4" opacity="0.16"/><ellipse cx="422" cy="604" rx="3.3" ry="1.2" transform="rotate(-17 422 601)" fill="#c4b0a4" opacity="0.15"/><ellipse cx="436" cy="615" rx="2.9" ry="0.9" transform="rotate(13 436 612)" fill="#c4b0a4" opacity="0.14"/><ellipse cx="459" cy="619" rx="6.4" ry="1.6" transform="rotate(0 457 616)" fill="#c4b0a4" opacity="0.24"/><ellipse cx="488" cy="615" rx="2.7" ry="0.7" transform="rotate(-32 488 612)" fill="#c4b0a4" opacity="0.21"/><ellipse cx="512" cy="618" rx="3.2" ry="0.8" transform="rotate(24 512 616)" fill="#c4b0a4" opacity="0.27"/><ellipse cx="536" cy="623" rx="6.4" ry="2.0" transform="rotate(19 535 620)" fill="#c4b0a4" opacity="0.18"/><ellipse cx="563" cy="630" rx="5.0" ry="1.2" transform="rotate(14 562 627)" fill="#c4b0a4" opacity="0.25"/><ellipse cx="583" cy="637" rx="4.3" ry="1.1" transform="rotate(-23 582 634)" fill="#c4b0a4" opacity="0.20"/><ellipse cx="616" cy="642" rx="5.6" ry="2.1" transform="rotate(9 614 638)" fill="#c4b0a4" opacity="0.19"/><ellipse cx="423" cy="569" rx="5.1" ry="1.4" transform="rotate(29 422 566)" fill="#c4b0a4" opacity="0.24"/><ellipse cx="463" cy="567" rx="5.4" ry="2.1" transform="rotate(14 461 563)" fill="#c4b0a4" opacity="0.24"/><ellipse cx="484" cy="572" rx="2.4" ry="0.7" transform="rotate(-2 483 570)" fill="#c4b0a4" opacity="0.14"/><ellipse cx="511" cy="574" rx="3.0" ry="1.2" transform="rotate(12 510 571)" fill="#c4b0a4" opacity="0.18"/><ellipse cx="545" cy="577" rx="3.7" ry="1.5" transform="rotate(10 544 574)" fill="#c4b0a4" opacity="0.23"/><ellipse cx="586" cy="575" rx="4.5" ry="1.6" transform="rotate(-17 584 571)" fill="#c4b0a4" opacity="0.19"/><ellipse cx="294" cy="796" rx="3.9" ry="1.1" transform="rotate(28 293 793)" fill="#c4b0a4" opacity="0.21"/><ellipse cx="317" cy="826" rx="9.4" ry="3.2" transform="rotate(22 314 821)" fill="#c4b0a4" opacity="0.15"/><ellipse cx="318" cy="840" rx="9.2" ry="2.4" transform="rotate(-2 315 836)" fill="#c4b0a4" opacity="0.16"/><ellipse cx="320" cy="859" rx="9.6" ry="2.9" transform="rotate(2 317 855)" fill="#c4b0a4" opacity="0.22"/><ellipse cx="317" cy="884" rx="7.5" ry="2.1" transform="rotate(15 315 880)" fill="#c4b0a4" opacity="0.17"/><ellipse cx="320" cy="892" rx="4.9" ry="1.8" transform="rotate(-8 318 889)" fill="#c4b0a4" opacity="0.26"/><ellipse cx="325" cy="933" rx="10.6" ry="2.6" transform="rotate(28 322 929)" fill="#c4b0a4" opacity="0.19"/><ellipse cx="347" cy="942" rx="7.8" ry="3.1" transform="rotate(16 344 937)" fill="#c4b0a4" opacity="0.20"/><ellipse cx="66" cy="731" rx="3.6" ry="1.2" transform="rotate(-3 65 728)" fill="#c4b0a4" opacity="0.16"/><ellipse cx="59" cy="736" rx="5.3" ry="1.9" transform="rotate(-3 58 732)" fill="#c4b0a4" opacity="0.17"/><ellipse cx="52" cy="774" rx="6.2" ry="2.5" transform="rotate(32 51 769)" fill="#c4b0a4" opacity="0.23"/><ellipse cx="44" cy="793" rx="7.8" ry="2.7" transform="rotate(-10 42 789)" fill="#c4b0a4" opacity="0.17"/><ellipse cx="48" cy="818" rx="7.2" ry="2.6" transform="rotate(-22 46 814)" fill="#c4b0a4" opacity="0.17"/><ellipse cx="50" cy="846" rx="3.9" ry="0.9" transform="rotate(-16 48 844)" fill="#c4b0a4" opacity="0.19"/><ellipse cx="30" cy="860" rx="4.2" ry="1.0" transform="rotate(12 29 857)" fill="#c4b0a4" opacity="0.21"/><ellipse cx="32" cy="882" rx="5.2" ry="1.5" transform="rotate(17 31 879)" fill="#c4b0a4" opacity="0.25"/><ellipse cx="450" cy="805" rx="7.0" ry="2.6" transform="rotate(-20 448 800)" fill="#c4b0a4" opacity="0.19"/><ellipse cx="484" cy="814" rx="7.3" ry="3.0" transform="rotate(-12 482 810)" fill="#c4b0a4" opacity="0.21"/><ellipse cx="509" cy="830" rx="5.8" ry="1.4" transform="rotate(26 507 827)" fill="#c4b0a4" opacity="0.15"/><ellipse cx="513" cy="840" rx="7.8" ry="2.2" transform="rotate(19 511 836)" fill="#c4b0a4" opacity="0.15"/><ellipse cx="534" cy="848" rx="5.5" ry="2.0" transform="rotate(14 532 845)" fill="#c4b0a4" opacity="0.17"/><ellipse cx="545" cy="868" rx="6.1" ry="1.5" transform="rotate(15 543 865)" fill="#c4b0a4" opacity="0.21"/><ellipse cx="583" cy="891" rx="6.7" ry="2.5" transform="rotate(-14 581 886)" fill="#c4b0a4" opacity="0.18"/><ellipse cx="595" cy="898" rx="5.6" ry="1.6" transform="rotate(-9 594 895)" fill="#c4b0a4" opacity="0.18"/><ellipse cx="603" cy="904" rx="7.7" ry="2.9" transform="rotate(3 601 900)" fill="#c4b0a4" opacity="0.25"/><ellipse cx="619" cy="925" rx="10.1" ry="2.8" transform="rotate(-33 616 921)" fill="#c4b0a4" opacity="0.20"/><ellipse cx="153" cy="629" rx="5.2" ry="1.9" transform="rotate(-31 152 626)" fill="#c4b0a4" opacity="0.21"/><ellipse cx="170" cy="627" rx="5.5" ry="2.2" transform="rotate(-29 169 623)" fill="#c4b0a4" opacity="0.22"/><ellipse cx="197" cy="637" rx="3.6" ry="1.0" transform="rotate(19 196 634)" fill="#c4b0a4" opacity="0.21"/><ellipse cx="222" cy="644" rx="6.7" ry="2.4" transform="rotate(-0 221 640)" fill="#c4b0a4" opacity="0.21"/><ellipse cx="250" cy="657" rx="4.5" ry="1.7" transform="rotate(12 249 654)" fill="#c4b0a4" opacity="0.25"/><ellipse cx="278" cy="665" rx="7.0" ry="2.4" transform="rotate(2 276 661)" fill="#c4b0a4" opacity="0.23"/><ellipse cx="292" cy="665" rx="3.3" ry="1.2" transform="rotate(34 291 662)" fill="#c4b0a4" opacity="0.19"/><ellipse cx="302" cy="670" rx="4.0" ry="1.6" transform="rotate(-31 301 667)" fill="#c4b0a4" opacity="0.18"/><ellipse cx="333" cy="680" rx="3.6" ry="0.9" transform="rotate(-3 332 678)" fill="#c4b0a4" opacity="0.21"/><ellipse cx="354" cy="683" rx="3.6" ry="1.0" transform="rotate(-19 353 680)" fill="#c4b0a4" opacity="0.23"/><ellipse cx="392" cy="628" rx="3.1" ry="0.9" transform="rotate(-23 391 625)" fill="#c4b0a4" opacity="0.24"/><ellipse cx="212" cy="767" rx="7.5" ry="2.4" transform="rotate(-17 210 763)" fill="#c4b0a4" opacity="0.25"/><ellipse cx="597" cy="679" rx="5.1" ry="2.0" transform="rotate(-1 595 675)" fill="#c4b0a4" opacity="0.16"/><ellipse cx="44" cy="937" rx="9.7" ry="2.9" transform="rotate(2 42 933)" fill="#c4b0a4" opacity="0.20"/><ellipse cx="188" cy="955" rx="8.9" ry="2.4" transform="rotate(-34 186 951)" fill="#c4b0a4" opacity="0.20"/><ellipse cx="250" cy="873" rx="8.2" ry="2.8" transform="rotate(-24 248 869)" fill="#c4b0a4" opacity="0.16"/><ellipse cx="218" cy="644" rx="6.0" ry="1.9" transform="rotate(10 216 640)" fill="#c4b0a4" opacity="0.27"/><ellipse cx="182" cy="760" rx="3.9" ry="1.4" transform="rotate(-35 181 757)" fill="#c4b0a4" opacity="0.25"/><ellipse cx="553" cy="882" rx="4.4" ry="1.2" transform="rotate(15 552 879)" fill="#c4b0a4" opacity="0.15"/><ellipse cx="319" cy="734" rx="7.7" ry="2.6" transform="rotate(25 317 729)" fill="#c4b0a4" opacity="0.18"/><ellipse cx="517" cy="711" rx="7.2" ry="1.8" transform="rotate(23 515 707)" fill="#c4b0a4" opacity="0.16"/><ellipse cx="359" cy="757" rx="3.9" ry="1.5" transform="rotate(-13 358 753)" fill="#c4b0a4" opacity="0.18"/><ellipse cx="60" cy="663" rx="4.6" ry="1.6" transform="rotate(-10 59 660)" fill="#c4b0a4" opacity="0.23"/><ellipse cx="79" cy="701" rx="4.9" ry="2.0" transform="rotate(23 78 698)" fill="#c4b0a4" opacity="0.22"/><ellipse cx="20" cy="694" rx="6.0" ry="1.6" transform="rotate(4 18 690)" fill="#c4b0a4" opacity="0.20"/><ellipse cx="19" cy="956" rx="9.9" ry="2.6" transform="rotate(8 17 951)" fill="#c4b0a4" opacity="0.17"/><ellipse cx="252" cy="762" rx="4.7" ry="1.4" transform="rotate(-8 251 759)" fill="#c4b0a4" opacity="0.23"/><ellipse cx="176" cy="618" rx="5.1" ry="1.5" transform="rotate(31 174 615)" fill="#c4b0a4" opacity="0.21"/><ellipse cx="475" cy="674" rx="6.3" ry="1.5" transform="rotate(-25 473 671)" fill="#c4b0a4" opacity="0.15"/><ellipse cx="445" cy="834" rx="4.6" ry="1.4" transform="rotate(24 444 831)" fill="#c4b0a4" opacity="0.22"/><ellipse cx="68" cy="629" rx="3.0" ry="0.8" transform="rotate(-7 68 626)" fill="#c4b0a4" opacity="0.14"/><ellipse cx="601" cy="715" rx="5.3" ry="1.8" transform="rotate(19 599 711)" fill="#c4b0a4" opacity="0.25"/><ellipse cx="258" cy="673" rx="4.4" ry="1.0" transform="rotate(-7 257 671)" fill="#c4b0a4" opacity="0.23"/><ellipse cx="641" cy="870" rx="7.9" ry="2.7" transform="rotate(-34 638 866)" fill="#c4b0a4" opacity="0.18"/><ellipse cx="230" cy="809" rx="4.0" ry="1.2" transform="rotate(1 229 807)" fill="#c4b0a4" opacity="0.24"/><ellipse cx="539" cy="793" rx="4.2" ry="1.5" transform="rotate(28 538 790)" fill="#c4b0a4" opacity="0.21"/><ellipse cx="237" cy="746" rx="3.8" ry="1.3" transform="rotate(34 236 743)" fill="#c4b0a4" opacity="0.20"/><ellipse cx="469" cy="889" rx="5.1" ry="2.0" transform="rotate(9 468 885)" fill="#c4b0a4" opacity="0.16"/><ellipse cx="65" cy="637" rx="4.7" ry="1.7" transform="rotate(-12 63 634)" fill="#c4b0a4" opacity="0.26"/><ellipse cx="242" cy="730" rx="3.6" ry="1.4" transform="rotate(-26 241 727)" fill="#c4b0a4" opacity="0.26"/><ellipse cx="359" cy="772" rx="6.2" ry="1.7" transform="rotate(29 358 768)" fill="#c4b0a4" opacity="0.27"/><ellipse cx="534" cy="789" rx="4.0" ry="1.5" transform="rotate(-15 533 786)" fill="#c4b0a4" opacity="0.26"/><ellipse cx="166" cy="778" rx="7.7" ry="2.0" transform="rotate(3 164 774)" fill="#c4b0a4" opacity="0.15"/><ellipse cx="32" cy="611" rx="6.0" ry="2.4" transform="rotate(11 30 607)" fill="#c4b0a4" opacity="0.18"/><ellipse cx="441" cy="847" rx="5.9" ry="2.0" transform="rotate(21 440 844)" fill="#c4b0a4" opacity="0.14"/><ellipse cx="139" cy="732" rx="3.7" ry="1.1" transform="rotate(5 138 729)" fill="#c4b0a4" opacity="0.16"/><ellipse cx="344" cy="645" rx="4.8" ry="1.4" transform="rotate(10 343 642)" fill="#c4b0a4" opacity="0.14"/><ellipse cx="441" cy="595" rx="5.7" ry="1.9" transform="rotate(-2 439 592)" fill="#c4b0a4" opacity="0.19"/><ellipse cx="411" cy="828" rx="7.9" ry="2.9" transform="rotate(-1 409 823)" fill="#c4b0a4" opacity="0.27"/><ellipse cx="548" cy="897" rx="6.6" ry="2.0" transform="rotate(5 546 893)" fill="#c4b0a4" opacity="0.26"/><ellipse cx="348" cy="757" rx="5.3" ry="2.1" transform="rotate(-13 347 753)" fill="#c4b0a4" opacity="0.14"/><ellipse cx="477" cy="917" rx="8.9" ry="3.0" transform="rotate(18 474 913)" fill="#c4b0a4" opacity="0.18"/><ellipse cx="390" cy="562" rx="2.4" ry="0.7" transform="rotate(0 390 560)" fill="#c4b0a4" opacity="0.19"/><ellipse cx="45" cy="829" rx="6.6" ry="1.8" transform="rotate(-14 43 825)" fill="#c4b0a4" opacity="0.19"/><ellipse cx="162" cy="563" rx="5.0" ry="2.0" transform="rotate(12 161 559)" fill="#c4b0a4" opacity="0.25"/><ellipse cx="281" cy="876" rx="5.2" ry="1.9" transform="rotate(5 280 872)" fill="#c4b0a4" opacity="0.26"/><ellipse cx="74" cy="870" rx="4.5" ry="1.5" transform="rotate(32 73 867)" fill="#c4b0a4" opacity="0.14"/><ellipse cx="167" cy="660" rx="3.9" ry="0.9" transform="rotate(28 166 657)" fill="#c4b0a4" opacity="0.25"/><ellipse cx="266" cy="684" rx="5.3" ry="1.3" transform="rotate(-33 264 682)" fill="#c4b0a4" opacity="0.26"/><ellipse cx="209" cy="747" rx="7.8" ry="3.1" transform="rotate(-2 207 742)" fill="#c4b0a4" opacity="0.16"/><ellipse cx="202" cy="927" rx="10.2" ry="2.7" transform="rotate(24 199 922)" fill="#c4b0a4" opacity="0.18"/><ellipse cx="314" cy="607" rx="5.5" ry="2.3" transform="rotate(-21 312 603)" fill="#c4b0a4" opacity="0.22"/><ellipse cx="134" cy="907" rx="4.3" ry="1.1" transform="rotate(16 133 904)" fill="#c4b0a4" opacity="0.18"/><ellipse cx="589" cy="904" rx="8.6" ry="2.2" transform="rotate(14 586 900)" fill="#c4b0a4" opacity="0.26"/><ellipse cx="296" cy="566" rx="2.8" ry="0.8" transform="rotate(15 295 564)" fill="#c4b0a4" opacity="0.16"/><ellipse cx="127" cy="634" rx="5.1" ry="1.9" transform="rotate(-9 126 630)" fill="#c4b0a4" opacity="0.22"/><ellipse cx="577" cy="784" rx="4.5" ry="1.3" transform="rotate(30 576 781)" fill="#c4b0a4" opacity="0.23"/><ellipse cx="188" cy="805" rx="3.9" ry="1.6" transform="rotate(-4 187 802)" fill="#c4b0a4" opacity="0.21"/><ellipse cx="351" cy="552" rx="3.9" ry="1.1" transform="rotate(-17 350 549)" fill="#c4b0a4" opacity="0.24"/><ellipse cx="67" cy="654" rx="5.7" ry="1.6" transform="rotate(-15 66 651)" fill="#c4b0a4" opacity="0.21"/><ellipse cx="41" cy="565" rx="3.5" ry="1.4" transform="rotate(6 41 565)" fill="#33251f" opacity="0.36"/><ellipse cx="61" cy="575" rx="2.3" ry="0.8" transform="rotate(-29 61 575)" fill="#33251f" opacity="0.54"/><ellipse cx="70" cy="590" rx="5.5" ry="2.3" transform="rotate(8 70 590)" fill="#33251f" opacity="0.35"/><ellipse cx="91" cy="586" rx="2.7" ry="0.9" transform="rotate(-33 91 586)" fill="#33251f" opacity="0.44"/><ellipse cx="120" cy="606" rx="4.5" ry="1.7" transform="rotate(11 120 606)" fill="#33251f" opacity="0.44"/><ellipse cx="140" cy="622" rx="5.4" ry="2.3" transform="rotate(-13 140 622)" fill="#33251f" opacity="0.37"/><ellipse cx="140" cy="630" rx="3.8" ry="1.8" transform="rotate(-8 140 630)" fill="#33251f" opacity="0.59"/><ellipse cx="164" cy="639" rx="5.9" ry="2.2" transform="rotate(34 164 639)" fill="#33251f" opacity="0.42"/><ellipse cx="186" cy="652" rx="3.5" ry="1.0" transform="rotate(-12 186 652)" fill="#33251f" opacity="0.59"/><ellipse cx="202" cy="662" rx="2.9" ry="0.8" transform="rotate(21 202 662)" fill="#33251f" opacity="0.35"/><ellipse cx="225" cy="671" rx="5.5" ry="1.7" transform="rotate(10 225 671)" fill="#33251f" opacity="0.33"/><ellipse cx="238" cy="682" rx="6.7" ry="3.0" transform="rotate(-14 238 682)" fill="#33251f" opacity="0.57"/><ellipse cx="258" cy="699" rx="5.4" ry="1.6" transform="rotate(34 258 699)" fill="#33251f" opacity="0.36"/><ellipse cx="284" cy="705" rx="4.0" ry="1.2" transform="rotate(-29 284 705)" fill="#33251f" opacity="0.47"/><ellipse cx="119" cy="537" rx="3.2" ry="1.6" transform="rotate(-1 119 537)" fill="#33251f" opacity="0.47"/><ellipse cx="135" cy="545" rx="4.7" ry="2.2" transform="rotate(-18 135 545)" fill="#33251f" opacity="0.36"/><ellipse cx="166" cy="552" rx="4.9" ry="2.3" transform="rotate(7 166 552)" fill="#33251f" opacity="0.43"/><ellipse cx="159" cy="566" rx="2.8" ry="1.2" transform="rotate(-17 159 566)" fill="#33251f" opacity="0.55"/><ellipse cx="187" cy="567" rx="4.3" ry="1.3" transform="rotate(-19 187 567)" fill="#33251f" opacity="0.47"/><ellipse cx="213" cy="576" rx="5.1" ry="1.7" transform="rotate(-34 213 576)" fill="#33251f" opacity="0.38"/><ellipse cx="216" cy="581" rx="3.3" ry="1.3" transform="rotate(-26 216 581)" fill="#33251f" opacity="0.41"/><ellipse cx="256" cy="596" rx="4.6" ry="1.9" transform="rotate(-25 256 596)" fill="#33251f" opacity="0.31"/><ellipse cx="210" cy="697" rx="6.8" ry="1.9" transform="rotate(10 210 697)" fill="#33251f" opacity="0.44"/><ellipse cx="190" cy="727" rx="3.1" ry="1.2" transform="rotate(17 190 727)" fill="#33251f" opacity="0.57"/><ellipse cx="192" cy="743" rx="7.2" ry="2.6" transform="rotate(13 192 743)" fill="#33251f" opacity="0.57"/><ellipse cx="180" cy="763" rx="7.2" ry="2.9" transform="rotate(9 180 763)" fill="#33251f" opacity="0.41"/><ellipse cx="179" cy="770" rx="6.1" ry="3.1" transform="rotate(27 179 770)" fill="#33251f" opacity="0.52"/><ellipse cx="177" cy="793" rx="5.3" ry="2.5" transform="rotate(-29 177 793)" fill="#33251f" opacity="0.53"/><ellipse cx="169" cy="806" rx="4.4" ry="1.9" transform="rotate(-0 169 806)" fill="#33251f" opacity="0.48"/><ellipse cx="154" cy="829" rx="4.9" ry="2.1" transform="rotate(-21 154 829)" fill="#33251f" opacity="0.35"/><ellipse cx="156" cy="852" rx="8.4" ry="3.0" transform="rotate(12 156 852)" fill="#33251f" opacity="0.36"/><ellipse cx="155" cy="871" rx="8.6" ry="3.1" transform="rotate(6 155 871)" fill="#33251f" opacity="0.39"/><ellipse cx="144" cy="886" rx="8.5" ry="3.7" transform="rotate(32 144 886)" fill="#33251f" opacity="0.38"/><ellipse cx="137" cy="898" rx="4.9" ry="1.8" transform="rotate(9 137 898)" fill="#33251f" opacity="0.45"/><ellipse cx="139" cy="927" rx="6.6" ry="1.9" transform="rotate(-33 139 927)" fill="#33251f" opacity="0.56"/><ellipse cx="131" cy="937" rx="5.7" ry="2.6" transform="rotate(-34 131 937)" fill="#33251f" opacity="0.34"/><ellipse cx="250" cy="733" rx="3.9" ry="1.2" transform="rotate(-32 250 733)" fill="#33251f" opacity="0.49"/><ellipse cx="276" cy="749" rx="6.7" ry="3.3" transform="rotate(13 276 749)" fill="#33251f" opacity="0.36"/><ellipse cx="280" cy="759" rx="5.2" ry="2.3" transform="rotate(-22 280 759)" fill="#33251f" opacity="0.38"/><ellipse cx="303" cy="781" rx="6.1" ry="2.7" transform="rotate(-7 303 781)" fill="#33251f" opacity="0.54"/><ellipse cx="308" cy="809" rx="7.0" ry="2.2" transform="rotate(-3 308 809)" fill="#33251f" opacity="0.49"/><ellipse cx="327" cy="823" rx="8.0" ry="3.6" transform="rotate(31 327 823)" fill="#33251f" opacity="0.44"/><ellipse cx="335" cy="839" rx="7.8" ry="3.3" transform="rotate(15 335 839)" fill="#33251f" opacity="0.36"/><ellipse cx="366" cy="862" rx="6.5" ry="2.9" transform="rotate(-13 366 862)" fill="#33251f" opacity="0.57"/><ellipse cx="366" cy="869" rx="6.0" ry="2.4" transform="rotate(19 366 869)" fill="#33251f" opacity="0.45"/><ellipse cx="382" cy="877" rx="8.2" ry="2.6" transform="rotate(-12 382 877)" fill="#33251f" opacity="0.54"/><ellipse cx="383" cy="901" rx="8.0" ry="3.7" transform="rotate(13 383 901)" fill="#33251f" opacity="0.58"/><ellipse cx="416" cy="917" rx="5.1" ry="2.0" transform="rotate(-15 416 917)" fill="#33251f" opacity="0.52"/><ellipse cx="332" cy="725" rx="5.3" ry="1.9" transform="rotate(-8 332 725)" fill="#33251f" opacity="0.55"/><ellipse cx="353" cy="734" rx="7.3" ry="2.9" transform="rotate(5 353 734)" fill="#33251f" opacity="0.36"/><ellipse cx="377" cy="737" rx="2.9" ry="1.5" transform="rotate(1 377 737)" fill="#33251f" opacity="0.42"/><ellipse cx="404" cy="745" rx="6.1" ry="1.8" transform="rotate(3 404 745)" fill="#33251f" opacity="0.42"/><ellipse cx="437" cy="751" rx="5.2" ry="1.6" transform="rotate(-5 437 751)" fill="#33251f" opacity="0.54"/><ellipse cx="450" cy="760" rx="3.9" ry="1.6" transform="rotate(30 450 760)" fill="#33251f" opacity="0.34"/><ellipse cx="462" cy="766" rx="4.1" ry="1.8" transform="rotate(-12 462 766)" fill="#33251f" opacity="0.41"/><ellipse cx="485" cy="779" rx="3.6" ry="1.4" transform="rotate(-17 485 779)" fill="#33251f" opacity="0.36"/><ellipse cx="513" cy="783" rx="5.1" ry="2.0" transform="rotate(-24 513 783)" fill="#33251f" opacity="0.36"/><ellipse cx="542" cy="793" rx="7.5" ry="3.1" transform="rotate(25 542 793)" fill="#33251f" opacity="0.37"/><ellipse cx="390" cy="605" rx="3.3" ry="1.2" transform="rotate(30 390 605)" fill="#33251f" opacity="0.37"/><ellipse cx="422" cy="601" rx="3.0" ry="1.3" transform="rotate(-17 422 601)" fill="#33251f" opacity="0.33"/><ellipse cx="436" cy="612" rx="2.7" ry="1.0" transform="rotate(13 436 612)" fill="#33251f" opacity="0.31"/><ellipse cx="457" cy="616" rx="5.8" ry="1.8" transform="rotate(0 457 616)" fill="#33251f" opacity="0.53"/><ellipse cx="488" cy="612" rx="2.5" ry="0.7" transform="rotate(-32 488 612)" fill="#33251f" opacity="0.47"/><ellipse cx="512" cy="616" rx="2.9" ry="0.9" transform="rotate(24 512 616)" fill="#33251f" opacity="0.60"/><ellipse cx="535" cy="620" rx="5.8" ry="2.2" transform="rotate(19 535 620)" fill="#33251f" opacity="0.40"/><ellipse cx="562" cy="627" rx="4.5" ry="1.3" transform="rotate(14 562 627)" fill="#33251f" opacity="0.55"/><ellipse cx="582" cy="634" rx="3.9" ry="1.2" transform="rotate(-23 582 634)" fill="#33251f" opacity="0.45"/><ellipse cx="614" cy="638" rx="5.1" ry="2.4" transform="rotate(9 614 638)" fill="#33251f" opacity="0.42"/><ellipse cx="422" cy="566" rx="4.6" ry="1.6" transform="rotate(29 422 566)" fill="#33251f" opacity="0.52"/><ellipse cx="461" cy="563" rx="4.9" ry="2.3" transform="rotate(14 461 563)" fill="#33251f" opacity="0.53"/><ellipse cx="483" cy="570" rx="2.2" ry="0.8" transform="rotate(-2 483 570)" fill="#33251f" opacity="0.30"/><ellipse cx="510" cy="571" rx="2.8" ry="1.4" transform="rotate(12 510 571)" fill="#33251f" opacity="0.40"/><ellipse cx="544" cy="574" rx="3.3" ry="1.7" transform="rotate(10 544 574)" fill="#33251f" opacity="0.51"/><ellipse cx="584" cy="571" rx="4.1" ry="1.8" transform="rotate(-17 584 571)" fill="#33251f" opacity="0.42"/><ellipse cx="293" cy="793" rx="3.6" ry="1.2" transform="rotate(28 293 793)" fill="#33251f" opacity="0.47"/><ellipse cx="314" cy="821" rx="8.6" ry="3.6" transform="rotate(22 314 821)" fill="#33251f" opacity="0.32"/><ellipse cx="315" cy="836" rx="8.4" ry="2.6" transform="rotate(-2 315 836)" fill="#33251f" opacity="0.35"/><ellipse cx="317" cy="855" rx="8.7" ry="3.2" transform="rotate(2 317 855)" fill="#33251f" opacity="0.48"/><ellipse cx="315" cy="880" rx="6.8" ry="2.3" transform="rotate(15 315 880)" fill="#33251f" opacity="0.39"/><ellipse cx="318" cy="889" rx="4.5" ry="2.0" transform="rotate(-8 318 889)" fill="#33251f" opacity="0.57"/><ellipse cx="322" cy="929" rx="9.6" ry="2.9" transform="rotate(28 322 929)" fill="#33251f" opacity="0.43"/><ellipse cx="344" cy="937" rx="7.1" ry="3.4" transform="rotate(16 344 937)" fill="#33251f" opacity="0.44"/><ellipse cx="65" cy="728" rx="3.3" ry="1.4" transform="rotate(-3 65 728)" fill="#33251f" opacity="0.36"/><ellipse cx="58" cy="732" rx="4.8" ry="2.1" transform="rotate(-3 58 732)" fill="#33251f" opacity="0.38"/><ellipse cx="51" cy="769" rx="5.6" ry="2.8" transform="rotate(32 51 769)" fill="#33251f" opacity="0.52"/><ellipse cx="42" cy="789" rx="7.1" ry="2.9" transform="rotate(-10 42 789)" fill="#33251f" opacity="0.38"/><ellipse cx="46" cy="814" rx="6.5" ry="2.9" transform="rotate(-22 46 814)" fill="#33251f" opacity="0.37"/><ellipse cx="48" cy="844" rx="3.5" ry="1.0" transform="rotate(-16 48 844)" fill="#33251f" opacity="0.43"/><ellipse cx="29" cy="857" rx="3.8" ry="1.1" transform="rotate(12 29 857)" fill="#33251f" opacity="0.47"/><ellipse cx="31" cy="879" rx="4.7" ry="1.7" transform="rotate(17 31 879)" fill="#33251f" opacity="0.55"/><ellipse cx="448" cy="800" rx="6.4" ry="2.9" transform="rotate(-20 448 800)" fill="#33251f" opacity="0.43"/><ellipse cx="482" cy="810" rx="6.6" ry="3.3" transform="rotate(-12 482 810)" fill="#33251f" opacity="0.46"/><ellipse cx="507" cy="827" rx="5.2" ry="1.6" transform="rotate(26 507 827)" fill="#33251f" opacity="0.32"/><ellipse cx="511" cy="836" rx="7.1" ry="2.4" transform="rotate(19 511 836)" fill="#33251f" opacity="0.32"/><ellipse cx="532" cy="845" rx="5.0" ry="2.2" transform="rotate(14 532 845)" fill="#33251f" opacity="0.38"/><ellipse cx="543" cy="865" rx="5.5" ry="1.7" transform="rotate(15 543 865)" fill="#33251f" opacity="0.47"/><ellipse cx="581" cy="886" rx="6.1" ry="2.8" transform="rotate(-14 581 886)" fill="#33251f" opacity="0.40"/><ellipse cx="594" cy="895" rx="5.1" ry="1.8" transform="rotate(-9 594 895)" fill="#33251f" opacity="0.41"/><ellipse cx="601" cy="900" rx="7.0" ry="3.2" transform="rotate(3 601 900)" fill="#33251f" opacity="0.55"/><ellipse cx="616" cy="921" rx="9.2" ry="3.1" transform="rotate(-33 616 921)" fill="#33251f" opacity="0.45"/><ellipse cx="152" cy="626" rx="4.7" ry="2.2" transform="rotate(-31 152 626)" fill="#33251f" opacity="0.46"/><ellipse cx="169" cy="623" rx="5.0" ry="2.4" transform="rotate(-29 169 623)" fill="#33251f" opacity="0.49"/><ellipse cx="196" cy="634" rx="3.3" ry="1.1" transform="rotate(19 196 634)" fill="#33251f" opacity="0.46"/><ellipse cx="221" cy="640" rx="6.1" ry="2.6" transform="rotate(-0 221 640)" fill="#33251f" opacity="0.46"/><ellipse cx="249" cy="654" rx="4.0" ry="1.9" transform="rotate(12 249 654)" fill="#33251f" opacity="0.56"/><ellipse cx="276" cy="661" rx="6.3" ry="2.7" transform="rotate(2 276 661)" fill="#33251f" opacity="0.51"/><ellipse cx="291" cy="662" rx="3.0" ry="1.3" transform="rotate(34 291 662)" fill="#33251f" opacity="0.41"/><ellipse cx="301" cy="667" rx="3.7" ry="1.8" transform="rotate(-31 301 667)" fill="#33251f" opacity="0.39"/><ellipse cx="332" cy="678" rx="3.3" ry="1.0" transform="rotate(-3 332 678)" fill="#33251f" opacity="0.48"/><ellipse cx="353" cy="680" rx="3.3" ry="1.1" transform="rotate(-19 353 680)" fill="#33251f" opacity="0.52"/><ellipse cx="391" cy="625" rx="2.8" ry="1.0" transform="rotate(-23 391 625)" fill="#33251f" opacity="0.53"/><ellipse cx="210" cy="763" rx="6.8" ry="2.6" transform="rotate(-17 210 763)" fill="#33251f" opacity="0.57"/><ellipse cx="595" cy="675" rx="4.6" ry="2.3" transform="rotate(-1 595 675)" fill="#33251f" opacity="0.37"/><ellipse cx="42" cy="933" rx="8.8" ry="3.2" transform="rotate(2 42 933)" fill="#33251f" opacity="0.45"/><ellipse cx="186" cy="951" rx="8.1" ry="2.7" transform="rotate(-34 186 951)" fill="#33251f" opacity="0.44"/><ellipse cx="248" cy="869" rx="7.5" ry="3.1" transform="rotate(-24 248 869)" fill="#33251f" opacity="0.35"/><ellipse cx="216" cy="640" rx="5.5" ry="2.2" transform="rotate(10 216 640)" fill="#33251f" opacity="0.60"/><ellipse cx="181" cy="757" rx="3.6" ry="1.6" transform="rotate(-35 181 757)" fill="#33251f" opacity="0.55"/><ellipse cx="552" cy="879" rx="4.0" ry="1.3" transform="rotate(15 552 879)" fill="#33251f" opacity="0.33"/><ellipse cx="317" cy="729" rx="7.0" ry="2.9" transform="rotate(25 317 729)" fill="#33251f" opacity="0.39"/><ellipse cx="515" cy="707" rx="6.5" ry="2.0" transform="rotate(23 515 707)" fill="#33251f" opacity="0.36"/><ellipse cx="358" cy="753" rx="3.6" ry="1.6" transform="rotate(-13 358 753)" fill="#33251f" opacity="0.39"/><ellipse cx="59" cy="660" rx="4.2" ry="1.8" transform="rotate(-10 59 660)" fill="#33251f" opacity="0.51"/><ellipse cx="78" cy="698" rx="4.5" ry="2.2" transform="rotate(23 78 698)" fill="#33251f" opacity="0.50"/><ellipse cx="18" cy="690" rx="5.4" ry="1.8" transform="rotate(4 18 690)" fill="#33251f" opacity="0.44"/><ellipse cx="17" cy="951" rx="9.0" ry="2.9" transform="rotate(8 17 951)" fill="#33251f" opacity="0.39"/><ellipse cx="251" cy="759" rx="4.3" ry="1.5" transform="rotate(-8 251 759)" fill="#33251f" opacity="0.50"/><ellipse cx="174" cy="615" rx="4.7" ry="1.6" transform="rotate(31 174 615)" fill="#33251f" opacity="0.47"/><ellipse cx="473" cy="671" rx="5.7" ry="1.7" transform="rotate(-25 473 671)" fill="#33251f" opacity="0.33"/><ellipse cx="444" cy="831" rx="4.2" ry="1.5" transform="rotate(24 444 831)" fill="#33251f" opacity="0.48"/><ellipse cx="68" cy="626" rx="2.7" ry="0.8" transform="rotate(-7 68 626)" fill="#33251f" opacity="0.32"/><ellipse cx="599" cy="711" rx="4.8" ry="2.0" transform="rotate(19 599 711)" fill="#33251f" opacity="0.55"/><ellipse cx="257" cy="671" rx="4.0" ry="1.1" transform="rotate(-7 257 671)" fill="#33251f" opacity="0.51"/><ellipse cx="638" cy="866" rx="7.2" ry="3.0" transform="rotate(-34 638 866)" fill="#33251f" opacity="0.40"/><ellipse cx="229" cy="807" rx="3.6" ry="1.3" transform="rotate(1 229 807)" fill="#33251f" opacity="0.54"/><ellipse cx="538" cy="790" rx="3.8" ry="1.7" transform="rotate(28 538 790)" fill="#33251f" opacity="0.46"/><ellipse cx="236" cy="743" rx="3.4" ry="1.5" transform="rotate(34 236 743)" fill="#33251f" opacity="0.45"/><ellipse cx="468" cy="885" rx="4.7" ry="2.3" transform="rotate(9 468 885)" fill="#33251f" opacity="0.36"/><ellipse cx="63" cy="634" rx="4.3" ry="1.9" transform="rotate(-12 63 634)" fill="#33251f" opacity="0.58"/><ellipse cx="241" cy="727" rx="3.2" ry="1.6" transform="rotate(-26 241 727)" fill="#33251f" opacity="0.57"/><ellipse cx="358" cy="768" rx="5.6" ry="1.9" transform="rotate(29 358 768)" fill="#33251f" opacity="0.60"/><ellipse cx="533" cy="786" rx="3.6" ry="1.7" transform="rotate(-15 533 786)" fill="#33251f" opacity="0.57"/><ellipse cx="164" cy="774" rx="7.0" ry="2.2" transform="rotate(3 164 774)" fill="#33251f" opacity="0.32"/><ellipse cx="30" cy="607" rx="5.4" ry="2.6" transform="rotate(11 30 607)" fill="#33251f" opacity="0.39"/><ellipse cx="440" cy="844" rx="5.4" ry="2.2" transform="rotate(21 440 844)" fill="#33251f" opacity="0.30"/><ellipse cx="138" cy="729" rx="3.3" ry="1.2" transform="rotate(5 138 729)" fill="#33251f" opacity="0.35"/><ellipse cx="343" cy="642" rx="4.4" ry="1.5" transform="rotate(10 343 642)" fill="#33251f" opacity="0.31"/><ellipse cx="439" cy="592" rx="5.1" ry="2.1" transform="rotate(-2 439 592)" fill="#33251f" opacity="0.42"/><ellipse cx="409" cy="823" rx="7.2" ry="3.2" transform="rotate(-1 409 823)" fill="#33251f" opacity="0.60"/><ellipse cx="546" cy="893" rx="6.0" ry="2.2" transform="rotate(5 546 893)" fill="#33251f" opacity="0.57"/><ellipse cx="347" cy="753" rx="4.9" ry="2.3" transform="rotate(-13 347 753)" fill="#33251f" opacity="0.32"/><ellipse cx="474" cy="913" rx="8.1" ry="3.3" transform="rotate(18 474 913)" fill="#33251f" opacity="0.39"/><ellipse cx="390" cy="560" rx="2.2" ry="0.8" transform="rotate(0 390 560)" fill="#33251f" opacity="0.42"/><ellipse cx="43" cy="825" rx="6.0" ry="2.0" transform="rotate(-14 43 825)" fill="#33251f" opacity="0.42"/><ellipse cx="161" cy="559" rx="4.6" ry="2.2" transform="rotate(12 161 559)" fill="#33251f" opacity="0.56"/><ellipse cx="280" cy="872" rx="4.7" ry="2.1" transform="rotate(5 280 872)" fill="#33251f" opacity="0.57"/><ellipse cx="73" cy="867" rx="4.1" ry="1.6" transform="rotate(32 73 867)" fill="#33251f" opacity="0.30"/><ellipse cx="166" cy="657" rx="3.6" ry="1.1" transform="rotate(28 166 657)" fill="#33251f" opacity="0.54"/><ellipse cx="264" cy="682" rx="4.8" ry="1.4" transform="rotate(-33 264 682)" fill="#33251f" opacity="0.57"/><ellipse cx="207" cy="742" rx="7.1" ry="3.5" transform="rotate(-2 207 742)" fill="#33251f" opacity="0.36"/><ellipse cx="199" cy="922" rx="9.2" ry="3.0" transform="rotate(24 199 922)" fill="#33251f" opacity="0.41"/><ellipse cx="312" cy="603" rx="5.0" ry="2.5" transform="rotate(-21 312 603)" fill="#33251f" opacity="0.49"/><ellipse cx="133" cy="904" rx="3.9" ry="1.2" transform="rotate(16 133 904)" fill="#33251f" opacity="0.39"/><ellipse cx="586" cy="900" rx="7.8" ry="2.4" transform="rotate(14 586 900)" fill="#33251f" opacity="0.58"/><ellipse cx="295" cy="564" rx="2.5" ry="0.9" transform="rotate(15 295 564)" fill="#33251f" opacity="0.36"/><ellipse cx="126" cy="630" rx="4.6" ry="2.1" transform="rotate(-9 126 630)" fill="#33251f" opacity="0.50"/><ellipse cx="576" cy="781" rx="4.1" ry="1.4" transform="rotate(30 576 781)" fill="#33251f" opacity="0.50"/><ellipse cx="187" cy="802" rx="3.5" ry="1.8" transform="rotate(-4 187 802)" fill="#33251f" opacity="0.46"/><ellipse cx="350" cy="549" rx="3.5" ry="1.2" transform="rotate(-17 350 549)" fill="#33251f" opacity="0.54"/><ellipse cx="66" cy="651" rx="5.2" ry="1.7" transform="rotate(-15 66 651)" fill="#33251f" opacity="0.46"/><ellipse cx="232" cy="712" rx="20" ry="6" fill="#33251f" opacity="0.5"/><ellipse cx="250" cy="700" rx="9" ry="3" fill="#33251f" opacity="0.45"/><ellipse cx="262" cy="726" rx="8" ry="3" fill="#33251f" opacity="0.5"/><ellipse cx="100" cy="862" rx="22" ry="7" fill="#33251f" opacity="0.45"/><ellipse cx="118" cy="870" rx="10" ry="4" fill="#33251f" opacity="0.4"/><ellipse cx="330" cy="850" rx="16" ry="5" fill="#33251f" opacity="0.4"/><ellipse cx="440" cy="905" rx="12" ry="4" fill="#33251f" opacity="0.35"/><ellipse cx="552" cy="930" rx="18" ry="6" fill="#33251f" opacity="0.4"/><ellipse cx="183" cy="812" rx="12" ry="4" fill="#33251f" opacity="0.4"/><ellipse cx="355" cy="898" rx="10" ry="4" fill="#33251f" opacity="0.4"/></g>
<g filter="url(#b1)"><path d="M559 410l-16 15" stroke="#4a3e36" stroke-width="3.6" opacity="0.44" stroke-linecap="round"/><path d="M464 384l-10 5" stroke="#8a6a48" stroke-width="2.5" opacity="0.28" stroke-linecap="round"/><path d="M464 424l-14 5" stroke="#9a7a5a" stroke-width="1.9" opacity="0.45" stroke-linecap="round"/><path d="M435 424l-10 3" stroke="#d4ac70" stroke-width="2.0" opacity="0.30" stroke-linecap="round"/><path d="M651 419l-10 9" stroke="#6a5a4a" stroke-width="2.0" opacity="0.49" stroke-linecap="round"/><path d="M450 438l-14 4" stroke="#9a7a5a" stroke-width="1.9" opacity="0.29" stroke-linecap="round"/><path d="M417 418l-18 5" stroke="#c49858" stroke-width="1.7" opacity="0.34" stroke-linecap="round"/><path d="M478 419l-10 6" stroke="#8a6a48" stroke-width="1.6" opacity="0.49" stroke-linecap="round"/><path d="M406 434l-22 6" stroke="#9a7a5a" stroke-width="2.4" opacity="0.39" stroke-linecap="round"/><path d="M402 417l-8 8" stroke="#8a6a48" stroke-width="1.8" opacity="0.31" stroke-linecap="round"/><path d="M609 363l-13 11" stroke="#7a6652" stroke-width="3.4" opacity="0.28" stroke-linecap="round"/><path d="M591 413l-23 7" stroke="#4a3e36" stroke-width="2.0" opacity="0.38" stroke-linecap="round"/><path d="M492 375l-10 8" stroke="#d4ac70" stroke-width="2.3" opacity="0.33" stroke-linecap="round"/><path d="M445 395l-9 6" stroke="#9a7a5a" stroke-width="1.9" opacity="0.26" stroke-linecap="round"/><path d="M652 361l-14 6" stroke="#7a6652" stroke-width="3.6" opacity="0.36" stroke-linecap="round"/><path d="M508 360l-24 7" stroke="#9a7a5a" stroke-width="2.3" opacity="0.30" stroke-linecap="round"/><path d="M650 367l-8 7" stroke="#54483e" stroke-width="1.8" opacity="0.36" stroke-linecap="round"/><path d="M438 433l-12 6" stroke="#8a6a48" stroke-width="3.9" opacity="0.36" stroke-linecap="round"/><path d="M524 414l-15 7" stroke="#54483e" stroke-width="3.8" opacity="0.28" stroke-linecap="round"/><path d="M610 373l-8 8" stroke="#7a6652" stroke-width="2.0" opacity="0.37" stroke-linecap="round"/><path d="M531 395l-16 5" stroke="#c49858" stroke-width="3.2" opacity="0.42" stroke-linecap="round"/><path d="M594 354l-19 8" stroke="#9a7a5a" stroke-width="2.2" opacity="0.50" stroke-linecap="round"/><path d="M583 434l-13 5" stroke="#4a3e36" stroke-width="2.7" opacity="0.44" stroke-linecap="round"/><path d="M483 389l-11 7" stroke="#c49858" stroke-width="2.4" opacity="0.41" stroke-linecap="round"/><path d="M588 417l-11 9" stroke="#54483e" stroke-width="3.9" opacity="0.49" stroke-linecap="round"/><path d="M532 393l-8 7" stroke="#9a7a5a" stroke-width="2.2" opacity="0.27" stroke-linecap="round"/><path d="M571 369l-14 13" stroke="#9a7a5a" stroke-width="2.3" opacity="0.39" stroke-linecap="round"/><path d="M621 330l-24 9" stroke="#9a7a5a" stroke-width="3.1" opacity="0.30" stroke-linecap="round"/><path d="M594 330l-15 15" stroke="#8a6a48" stroke-width="1.9" opacity="0.47" stroke-linecap="round"/><path d="M428 439l-14 9" stroke="#9a7a5a" stroke-width="2.7" opacity="0.35" stroke-linecap="round"/><path d="M556 394l-9 8" stroke="#4a3e36" stroke-width="2.4" opacity="0.49" stroke-linecap="round"/><path d="M618 420l-17 11" stroke="#4a3e36" stroke-width="2.9" opacity="0.33" stroke-linecap="round"/><path d="M475 408l-23 10" stroke="#c49858" stroke-width="3.5" opacity="0.35" stroke-linecap="round"/><path d="M607 389l-14 5" stroke="#54483e" stroke-width="2.9" opacity="0.49" stroke-linecap="round"/><path d="M647 375l-11 10" stroke="#4a3e36" stroke-width="2.5" opacity="0.33" stroke-linecap="round"/><path d="M634 367l-10 9" stroke="#54483e" stroke-width="2.6" opacity="0.49" stroke-linecap="round"/><path d="M526 390l-19 9" stroke="#8a6a48" stroke-width="3.0" opacity="0.31" stroke-linecap="round"/><path d="M650 356l-14 6" stroke="#7a6652" stroke-width="2.7" opacity="0.32" stroke-linecap="round"/><path d="M522 358l-17 9" stroke="#c49858" stroke-width="1.6" opacity="0.28" stroke-linecap="round"/><path d="M500 398l-17 7" stroke="#9a7a5a" stroke-width="3.5" opacity="0.31" stroke-linecap="round"/><path d="M468 388l-24 10" stroke="#9a7a5a" stroke-width="2.8" opacity="0.47" stroke-linecap="round"/><path d="M625 424l-8 3" stroke="#7a6652" stroke-width="2.8" opacity="0.33" stroke-linecap="round"/><path d="M476 409l-15 7" stroke="#8a6a48" stroke-width="1.6" opacity="0.31" stroke-linecap="round"/><path d="M516 433l-20 12" stroke="#4a3e36" stroke-width="2.6" opacity="0.45" stroke-linecap="round"/><path d="M552 406l-21 14" stroke="#54483e" stroke-width="2.7" opacity="0.42" stroke-linecap="round"/><path d="M584 427l-13 10" stroke="#7a6652" stroke-width="3.6" opacity="0.42" stroke-linecap="round"/><path d="M510 378l-16 15" stroke="#8a6a48" stroke-width="1.9" opacity="0.42" stroke-linecap="round"/><path d="M627 436l-16 8" stroke="#4a3e36" stroke-width="1.7" opacity="0.31" stroke-linecap="round"/><path d="M609 410l-19 5" stroke="#54483e" stroke-width="3.9" opacity="0.50" stroke-linecap="round"/><path d="M579 320l-22 9" stroke="#d4ac70" stroke-width="3.3" opacity="0.28" stroke-linecap="round"/><path d="M475 435l-9 6" stroke="#9a7a5a" stroke-width="3.5" opacity="0.27" stroke-linecap="round"/><path d="M454 416l-16 12" stroke="#c49858" stroke-width="1.6" opacity="0.39" stroke-linecap="round"/><path d="M589 424l-9 5" stroke="#7a6652" stroke-width="3.2" opacity="0.37" stroke-linecap="round"/><path d="M490 414l-23 8" stroke="#c49858" stroke-width="1.9" opacity="0.41" stroke-linecap="round"/><path d="M529 431l-15 10" stroke="#7a6652" stroke-width="1.7" opacity="0.31" stroke-linecap="round"/><path d="M612 336l-20 16" stroke="#c49858" stroke-width="2.6" opacity="0.35" stroke-linecap="round"/><path d="M433 399l-12 8" stroke="#d4ac70" stroke-width="1.7" opacity="0.28" stroke-linecap="round"/><path d="M551 356l-21 12" stroke="#c49858" stroke-width="1.8" opacity="0.38" stroke-linecap="round"/><path d="M538 377l-17 16" stroke="#9a7a5a" stroke-width="3.2" opacity="0.31" stroke-linecap="round"/><path d="M430 439l-15 13" stroke="#8a6a48" stroke-width="3.3" opacity="0.34" stroke-linecap="round"/><path d="M613 336l-20 15" stroke="#9a7a5a" stroke-width="2.4" opacity="0.43" stroke-linecap="round"/><path d="M491 387l-14 13" stroke="#c49858" stroke-width="2.8" opacity="0.40" stroke-linecap="round"/><path d="M546 412l-14 5" stroke="#4a3e36" stroke-width="2.0" opacity="0.30" stroke-linecap="round"/><path d="M525 434l-18 9" stroke="#54483e" stroke-width="2.7" opacity="0.47" stroke-linecap="round"/><path d="M558 375l-16 5" stroke="#8a6a48" stroke-width="3.1" opacity="0.27" stroke-linecap="round"/><path d="M622 420l-14 9" stroke="#4a3e36" stroke-width="2.2" opacity="0.29" stroke-linecap="round"/><path d="M473 390l-16 5" stroke="#c49858" stroke-width="2.3" opacity="0.26" stroke-linecap="round"/><path d="M406 426l-22 8" stroke="#c49858" stroke-width="2.2" opacity="0.42" stroke-linecap="round"/><path d="M586 331l-11 3" stroke="#8a6a48" stroke-width="3.1" opacity="0.40" stroke-linecap="round"/><path d="M632 394l-19 7" stroke="#7a6652" stroke-width="2.2" opacity="0.43" stroke-linecap="round"/></g>
<g filter="url(#b1)">
<!-- pants -->
<path d="M316.800 537.600Q340 541 364.300 527L368 538Q373 552 374.800 585Q374 604 369.600 620.200Q364 646 357.300 669.400L334.400 666Q335.500 652 336.200 644.800Q340 628 343.200 616.700L345 602.600L341.400 609.600Q334 628 325.600 644.800L304.500 673L290.400 673L283.400 660.600Q294 646 301 634.300Q309 620 313.300 609.600Q316.500 592 316.800 574.500z" fill="#17171d"/>
<path d="M324 560Q336 566 350 560Q346 590 343 612L336 640Q340 600 338 580z" fill="#22222a" opacity=".7"/>
<path d="M317 538Q340 542 364.500 527.500L366 533.500Q342 547 317.500 544.500z" fill="#3b2a24"/>
<!-- feet -->
<path d="M285.200 674.700L302.800 676.500Q300 686 299.300 694Q303 703 304.500 709.900Q300 713 294 713.400Q286 713 279.900 711.600Q274 707 274.600 701Q277 693 279.900 687z" fill="#dcae90"/>
<path d="M336.200 671.200L355.500 671.200Q356 680 359 687Q367 693 373.100 699.300Q373 703 371.300 703.900L353.700 702.800Q343 700 336.200 695.800Q331 692 330.900 687z" fill="#dcae90"/>
<path d="M279 706Q288 711 303 708L304 711Q296 714 282 712z" fill="#b88a6e"/>
<path d="M334 694Q350 701 372 701L371 704L352 703Q340 700 334 694z" fill="#b88a6e"/>
<!-- shirt -->
<path d="M289.400 454.600Q292 446 296 439.400L308.300 435.300L330 433L350.700 439.400L352 454L356 474.100L361 505L364.200 526.400Q342 539 318.100 539.700L316 515.100Q313 504 309.900 494.600Q303 483 297.600 474.100Q292 464 289.400 454.600z" fill="url(#shirt)"/>
<path d="M300 476Q312 470 322 450Q330 470 334 500Q338 520 340 537Q330 540 318.100 539.700L316 515.100Q313 504 309.900 494.600z" fill="#8c93a6" opacity=".5"/>
<path d="M346 450L352 454L356 474L361 505L364 526L356 530Q352 490 346 450z" fill="#c2c7d4" opacity=".6"/>
<!-- man's head -->
<path d="M282.300 409.300Q292 404 298.800 406.600L307 412L313.800 420.200L309.700 427.100Q306 432 301.500 436.600L290.600 439.400L284 430Q280 418 282.300 409.300z" fill="#dcae90"/>
<path d="M281 406.600Q286 405.500 290 407Q285 414 285.100 418.900Q284 426 287 432Q289 437 290.600 442.100L282.300 442.100Q276 440 274.100 436.600Q270 430 270.700 425.700Q270.500 419 272.800 414.800Q276 409 281 406.600z" fill="#2a201c"/>
<path d="M290 428Q294 426 295 430Q294 434 291 433z" fill="#c49072"/>
<path d="M296 410Q304 407 309 413L313 419L306 419Q302 413 296 410z" fill="#4a362c" opacity=".75"/>
</g>
<g filter="url(#b1)">
<!-- second tower peeks behind are drawn earlier -->
<!-- raised leg / foot -->
<path d="M439.100 315.100L449.300 299.800L459.600 285.400Q463 280 467.800 279.300Q473 279 476 282.300Q476 287 467.800 295.700L455.500 310L446.200 319.200z" fill="#e9c3a8"/>
<path d="M462 290Q470 286 476 283Q475 288 467.800 295.700L455.500 310L450 314Q458 302 462 290z" fill="#cf9e80" opacity=".8"/>
<!-- lower leg / foot -->
<path d="M455.500 392.100L473.900 390Q482 393 490.300 397.200L502.600 399.200L508.800 402.300Q514 410 517 416.700L522.700 426.900Q520 429 517 427.900Q508 422 502.600 416.700L492.400 406.400L473.900 400.300L453.400 394.100z" fill="#e9c3a8"/>
<path d="M500 404Q510 412 520 427L517 427.900Q508 422 502.600 416.700L494 408z" fill="#c9906e" opacity=".8"/>
<!-- man's raised arm (behind dress edge) -->
<path d="M342.500 387.400L350.700 383.300L353.400 392.900L352 412L349.300 433.900L350 440L330 452L317.900 455.800L312.400 442.100L317.900 433.900Q325 426 330.200 420.200Q334 410 337 402.500z" fill="#dcae90"/>
<path d="M346 390L352 392L352 412L349.300 433.900L344 436Q348 410 346 390z" fill="#c08a6c" opacity=".7"/>
<path d="M312.400 442.100L317.900 433.900Q324 430 332 432L348 436.600L350.700 439.400L346 452L330 458L317.900 455.800z" fill="url(#shirt)"/>
<!-- her far arm -->
<path d="M290.600 383.300L304.200 383.300Q312 396 323.400 414.800L319.300 420.200Q312 416 306 408Q298 396 290.600 383.300z" fill="#d8a888"/>
<!-- hair strand hanging -->
<path d="M258 352Q262 362 262 372Q264 384 270 397Q266 394 263 388Q258 376 256 364z" fill="#c4a06c"/>
<!-- dress skirt -->
<path d="M359.100 341.800Q370 343 379.600 346.900Q392 352 400.100 356.200L418.600 336.700L439.100 315.100L445.200 319.200L449.300 336.700L453.400 357.200Q457 368 461.600 377.700L473.900 386.900Q468 394 461.600 400.300Q456 408 451.400 416.700L447.300 433.100Q444 442 439.100 449.500Q434 458 426.800 465.900Q420 476 412.400 484.300L400.100 496.600Q392 503 383.700 507.900Q374 512 363.200 514.100L361.100 504.900L356 474.100L351.900 449.500L350.500 433.100L352 412L353.400 398.400L350.700 384.700L346 372z" fill="url(#dress)"/>
<!-- bodice -->
<path d="M290.600 343.700L296 341L312.400 343.700L337 343.700L358.900 342.300Q364 362 352 384L342.500 386.700L326.100 387.400L309.700 383.300L287.800 376.500L281 361.500z" fill="#f7f1ed"/>
<path d="M287.800 376.500L309.700 383.300L326.100 387.400L342.500 386.700L344 380Q326 380 308 374Q296 370 284 366z" fill="#ddd0c8" opacity=".85"/>
<!-- dress shading -->
<path d="M400.100 356.200Q414 372 420 400Q424 430 412.400 484.300L400.100 496.600Q412 450 408 416Q402 380 384 358z" fill="#e7dad3" opacity=".7"/>
<path d="M352 412Q360 440 362 470Q364 494 363.200 514.100L361.100 504.900L356 474.100L351.900 449.500L350.500 433.100z" fill="#dccdc5" opacity=".85"/>
<path d="M418.600 336.700L439.100 315.100L445.200 319.200L449.300 336.700Q440 344 430 360Q424 350 418.600 336.700z" fill="#fbf7f4" opacity=".9"/>
<path d="M430 360Q440 380 440 410Q438 430 430 450Q436 420 432 396Q430 376 430 360z" fill="#e9ddd6" opacity=".6"/>
<!-- man's hand on her waist -->
<path d="M330.900 362.800Q334 359 338.400 358Q344 358 348.700 365.600L350.700 382L342.500 386.700Q336 384 331.600 379.200Q329 370 330.900 362.800z" fill="#dcae90"/>
<path d="M334 362L336 372M339 360L341 371M344 362L345 373" stroke="#b88466" stroke-width="1" fill="none" opacity=".7"/>
<!-- her near arm -->
<path d="M255 350.500Q262 346 270 348L279.600 360L290.600 384.700L301.500 406.600L309.700 425.700L301.500 433.900Q296 426 290.600 416.100L275.500 392.900L259 365.600Q255 358 255 350.500z" fill="#e9c3a8"/>
<path d="M259 365.600L275.500 392.900L290.600 416.100L301.500 433.900L305 430Q296 416 286 398Q272 376 262 358z" fill="#d0a080" opacity=".7"/>
<!-- shoulder / back -->
<path d="M255 342.300Q260 335 266 334L290.600 341L290.600 343.700L281 361.500L270 350Q262 346 255 350.500z" fill="#e9c3a8"/>
<path d="M259.100 340.300L296 341" stroke="#f4ece6" stroke-width="1.600" fill="none"/>
<!-- head -->
<path d="M243.400 310.900Q248 307 255 306.100Q266 308 268 322Q268 336 262 343L255 342.300L244.800 345.700Q240 342 241.300 334.100L235.200 328Q238 318 243.400 310.900z" fill="#e9c3a8"/>
<path d="M240.500 332.500L246 335L242 339.500z" fill="#7e3d3a"/>
<path d="M245.400 307.500Q256 302 266 306Q272 308 276 316Q281 326 283 334Q278 332 274 336Q272 344 268 348Q266 340 266 330Q262 320 255 318Q250 312 245.400 307.500z" fill="#d3b583"/>
<path d="M258 306Q268 306 274 314Q279 324 283 334Q276 330 272 322Q266 312 258 306z" fill="#b8945e" opacity=".7"/>
<path d="M255 322Q258 320 259 325Q258 329 255 328z" fill="#d8a888"/>
</g>
<rect x="0" y="0" width="658" height="111.0" fill="#000" opacity=".5"/>
<rect x="0" y="767.0" width="658" height="195.0" fill="#000" opacity=".5"/>
<g fill="none">
<path d="M1 111.0L657 767.0M657 111.0L1 767.0" stroke="#747474" stroke-width="3.900" opacity=".85"/>
<path d="M1 111.0L657 767.0M657 111.0L1 767.0" stroke="#f2f2f2" stroke-width="1.900"/>
</g>
</svg>
<div class="a" style="left:484px;top:209.600px;width:662.200px;height:963.500px;border:1.800px solid #b6b6b6;border-bottom:none"></div>
<div class="a" style="left:485.700px;top:211.300px;width:658.800px;height:962px;border:1.400px solid #0a0a0a;border-bottom:none"></div>
<div class="a" style="left:485.500px;top:320.300px;width:659.300px;height:659.300px;border:1.200px solid #c2c2c2;"></div>
<div class="a" style="left:486.500px;top:321.500px;width:657.300px;height:657px;border:1.200px solid #0c0c0c;"></div>
<div class="a" style="left:481.4px;top:317.2px;width:14.8px;height:3.2px;background:#b9b9b9"></div>
<div class="a" style="left:481.4px;top:317.2px;width:3.2px;height:15.0px;background:#b9b9b9"></div>
<div class="a" style="left:1134.0px;top:317.2px;width:14.8px;height:3.2px;background:#b9b9b9"></div>
<div class="a" style="left:1145.6px;top:317.2px;width:3.2px;height:15.0px;background:#b9b9b9"></div>
<div class="a" style="left:481.4px;top:979.6px;width:14.8px;height:3.2px;background:#b9b9b9"></div>
<div class="a" style="left:481.4px;top:967.8px;width:3.2px;height:15.0px;background:#b9b9b9"></div>
<div class="a" style="left:1134.0px;top:979.6px;width:14.8px;height:3.2px;background:#b9b9b9"></div>
<div class="a" style="left:1145.6px;top:967.8px;width:3.2px;height:15.0px;background:#b9b9b9"></div>
<div class="a" style="left:807.5px;top:317.2px;width:15.0px;height:3.2px;background:#b9b9b9"></div>
<div class="a" style="left:807.5px;top:979.6px;width:15.0px;height:3.2px;background:#b9b9b9"></div>
<div class="a" style="left:481.4px;top:643.0px;width:3.2px;height:15.0px;background:#b9b9b9"></div>
<div class="a" style="left:1145.6px;top:643.0px;width:3.2px;height:15.0px;background:#b9b9b9"></div>

<svg width="0" height="0" style="left:0;top:0"><defs>
<linearGradient id="tsky" gradientUnits="userSpaceOnUse" x1="0" y1="-8" x2="0" y2="54">
<stop offset="0" stop-color="#fdf4f5"/><stop offset=".3" stop-color="#faeef1"/><stop offset=".55" stop-color="#f1e5ec"/><stop offset=".72" stop-color="#e4dfe9"/><stop offset=".8" stop-color="#dcd6e3"/><stop offset=".87" stop-color="#efd8da"/><stop offset=".94" stop-color="#dccfdc"/><stop offset="1" stop-color="#cfc6d6"/></linearGradient>
<linearGradient id="tsand" gradientUnits="userSpaceOnUse" x1="0" y1="54" x2="0" y2="100"><stop offset="0" stop-color="#b09c93"/><stop offset=".5" stop-color="#a28d84"/><stop offset="1" stop-color="#917c73"/></linearGradient>
<linearGradient id="tcliff" gradientUnits="userSpaceOnUse" x1="0" y1="20" x2="0" y2="54"><stop offset="0" stop-color="#c29b5e"/><stop offset=".5" stop-color="#a98653"/><stop offset=".8" stop-color="#8a7250"/><stop offset="1" stop-color="#5e5040"/></linearGradient>
<filter id="tb" x="-10%" y="-10%" width="120%" height="120%"><feGaussianBlur stdDeviation=".45"/></filter>
<g id="tscene">
<rect x="-150" y="-100" width="400" height="160" fill="url(#tsky)"/>
<rect x="-150" y="54" width="400" height="150" fill="url(#tsand)"/>
<g filter="url(#tb)">
<path d="M-60 52L-60 40Q-20 38 -5 43L4 44.500Q10 43 14 45.500Q20 47 24 50L26 52z" fill="#8f6c79"/>
<path d="M-10 52Q2 44.500 10 46Q18 47.500 26 52z" fill="#a3727a"/>
<!-- bridge -->
<path d="M22.200 39h2v11h-2zM22.200 47.300L40 46.600V47.600L22.200 48.400zM22.200 47.800L-30 48v1L22.200 48.800z" fill="#d2646a"/>
<path d="M37.200 42h1.300v6h-1.300z" fill="#d2646a" opacity=".8"/>
<!-- water -->
<path d="M-150 51H14Q22 54 27 56Q18 58.500 0 58.500Q-40 59 -150 62z" fill="#ece6ec"/>
<path d="M-150 59Q-20 58 8 57.500Q-10 61 -150 66z" fill="#c9b2b4"/>
<!-- rocks -->
<path d="M2 51.500Q8 48 16 48.500Q22 47 27 48.500Q32 46 38 46.500Q44 45 50 46.500Q58 45.500 64 47L140 47V56.500H30Q14 56 6 54.500Q1 53.500 2 51.500z" fill="#4a3a30"/>
<path d="M27 49Q32 46.500 38 47.500Q42 50 40 53H28Q25 51 27 49z" fill="#7b6444"/>
<path d="M8 50.500Q14 48.700 20 49.700L22 52H9z" fill="#6b5640"/>
<!-- cliff -->
<path d="M250 -70L96.500 20L90 27Q84 32 80 35Q74 39 70 42Q64 45 58 46.500Q54 48 50 50.500L58 55.500H250z" fill="url(#tcliff)"/>
<path d="M52 50Q60 49 70 50L250 49V56.300H52Q48 53 52 50z" fill="#4c4030"/>
<path d="M64 51.500Q72 50.500 80 52L82 55.500H62z" fill="#4f5c34"/>
</g>
</g>
</defs></svg>
<div class="a" style="left:21.800px;top:1286.300px;width:2019.200px;height:157.500px;border:1.500px solid #3d3d3d;"></div>
<div class="a" style="left:25.600px;top:1290.600px;width:2012px;height:133.300px;background:#2b2b2b;"></div>
<div class="a" style="left:26.2px;top:1290.600px;width:131.800px;height:133.300px;background:#cbcbcb;border:1px solid #dadada;border-right-color:#b4b4b4;border-bottom-color:#b9b9b9"></div>
<div class="a" style="left:158.0px;top:1290.600px;width:1.600px;height:133.300px;background:#7a7a7a"></div>
<div class="a" style="left:28.9px;top:1295.300px;width:6px;height:3.800px;background:#fff;"></div>
<div class="a" style="left:41px;top:1305px;width:104px;height:104px;background:#fff;border:3px solid #d0d365;"></div>
<svg style="left:45.0px;top:1309.0px;overflow:hidden" width="96" height="96" viewBox="0 0 96 96"><use href="#tscene" transform="translate(-32,-40) scale(1.72)"/><g filter="url(#tb)"><path d="M97 25L88 31L80 37L72 42L62 47L52 51L60 58H97z" fill="#b38e58"/><path d="M97 25L88 31L84 40L78 48L97 50z" fill="#c29b5e" opacity=".8"/><path d="M50 52Q70 48 97 50V59H50z" fill="#54463a"/><path d="M70 54Q82 52 97 54V59H68z" fill="#4a5932"/></g><g transform="translate(50,93) scale(1.18) rotate(0)"><path d="M-4.500 -23L4.800 -23L5 -12L3.200 -1L0.500 -1L1 -11L-0.500 -15L-3 -1L-5.800 -1L-5.500 -12z" fill="#1b1b22"/><path d="M-6.500 -1.200h4v2.200h-5zM0.500 -1.200h3.500l1.500 2.200h-5z" fill="#dcae92"/><path d="M-5 -22.500L-5.800 -36Q-5 -39.500 -1 -40L3.500 -39.500Q6 -38 5.800 -34L5.200 -22.500z" fill="#a3abba"/><ellipse cx="-2.500" cy="-43" rx="2.700" ry="3.200" fill="#dcae92"/><path d="M-5.200 -43.500Q-5.500 -47 -2 -46.800Q0.300 -46.500 0.300 -44Q-2 -45.500 -3.500 -43z" fill="#33261f"/></g><rect x="54" y="74.500" width="42" height="21.500" fill="#0c0c0c"/><rect x="57" y="78" width="18" height="16" fill="#050505" stroke="#8c8c8c" stroke-width="1.200"/><rect x="60.500" y="81.500" width="11" height="9" fill="none" stroke="#8c8c8c" stroke-width=".9" stroke-dasharray="1.800 .9"/><rect x="77.500" y="78" width="16.500" height="16" fill="#050505" stroke="#8c8c8c" stroke-width="1.200"/><path d="M93.400 78.600V93.400H78.100z" fill="#9a9a9a"/><path d="M79.500 82.300h5M82 79.800v5" stroke="#bdbdbd" stroke-width="1.100"/><path d="M87.500 90.500h4" stroke="#222" stroke-width="1.100"/></svg>
<svg style="left:43.4px;top:1413px" width="8" height="8" viewBox="0 0 10 10"><path d="M5 0l1.300 3.600l3.700 .1l-2.900 2.300l1 3.700l-3.100-2.100l-3.100 2.100l1-3.700l-2.900-2.300l3.700-.1z" fill="#0a0a0a"/></svg>
<div class="a" style="left:159.6px;top:1290.600px;width:131.800px;height:133.300px;background:#cbcbcb;border:1px solid #dadada;border-right-color:#b4b4b4;border-bottom-color:#b9b9b9"></div>
<div class="a" style="left:291.4px;top:1290.600px;width:1.600px;height:133.300px;background:#7a7a7a"></div>
<div class="a" style="left:162.3px;top:1295.300px;width:6px;height:3.800px;background:#fff;"></div>
<div class="a" style="left:174px;top:1305px;width:104px;height:104px;background:#fff;border:3px solid #d0d365;"></div>
<svg style="left:178.0px;top:1309.0px;overflow:hidden" width="96" height="96" viewBox="0 0 96 96"><use href="#tscene" transform="translate(-30,-46) scale(1.75)"/><g filter="url(#tb)"><path d="M97 16L88 24L80 31L72 36L64 40L54 43L46 46L54 51H97z" fill="#b38e58"/><path d="M97 16L88 24L84 32L80 40L97 42z" fill="#c29b5e" opacity=".8"/><path d="M44 46Q70 42 97 43V51H44z" fill="#54463a"/><path d="M62 47Q76 45 92 47V51H60z" fill="#4a5932"/></g><g transform="translate(47,80) scale(0.95) rotate(0)"><path d="M-4.500 -23L4.800 -23L8 -16L6 -8L3.500 -8L4 -15L-2 -17L-8 -10L-13 -6L-14.500 -8L-9 -14z" fill="#1b1b22"/><path d="M-15.500 -8.500l2 3l-2 1l-2 -3zM3 -8h3.500l1.500 2h-5z" fill="#dcae92"/><path d="M-5 -22.500L-5.800 -36Q-5 -39.500 -1 -40L3.500 -39.500Q6 -38 5.800 -34L5.200 -22.500z" fill="#a3abba"/><ellipse cx="-2.500" cy="-43" rx="2.700" ry="3.200" fill="#dcae92"/><path d="M-5.200 -43.500Q-5.500 -47 -2 -46.800Q0.300 -46.500 0.300 -44Q-2 -45.500 -3.500 -43z" fill="#33261f"/></g><path d="M52 40L57 38L60 50L66 62L72 68L58 73L55 62z" fill="#f6efec"/><ellipse cx="48" cy="39.500" rx="2.600" ry="3" fill="#dcae92"/><path d="M46 37Q50 35 51 40L50 44Q49 40 46 37z" fill="#c9aa7c"/><path d="M70 66l3 6l-2 .5l-3-5z" fill="#dcae92"/><rect x="54" y="74.500" width="42" height="21.500" fill="#0c0c0c"/><rect x="57" y="78" width="18" height="16" fill="#050505" stroke="#8c8c8c" stroke-width="1.200"/><rect x="60.500" y="81.500" width="11" height="9" fill="none" stroke="#8c8c8c" stroke-width=".9" stroke-dasharray="1.800 .9"/><rect x="77.500" y="78" width="16.500" height="16" fill="#050505" stroke="#8c8c8c" stroke-width="1.200"/><path d="M93.400 78.600V93.400H78.100z" fill="#9a9a9a"/><path d="M79.500 82.300h5M82 79.800v5" stroke="#bdbdbd" stroke-width="1.100"/><path d="M87.500 90.500h4" stroke="#222" stroke-width="1.100"/></svg>
<svg style="left:176.8px;top:1413px" width="8" height="8" viewBox="0 0 10 10"><path d="M5 0l1.300 3.600l3.700 .1l-2.900 2.300l1 3.700l-3.100-2.100l-3.100 2.100l1-3.700l-2.900-2.300l3.700-.1z" fill="#0a0a0a"/></svg>
<div class="a" style="left:293.0px;top:1290.600px;width:131.800px;height:133.300px;background:#cbcbcb;border:1px solid #dadada;border-right-color:#b4b4b4;border-bottom-color:#b9b9b9"></div>
<div class="a" style="left:424.8px;top:1290.600px;width:1.600px;height:133.300px;background:#7a7a7a"></div>
<div class="a" style="left:295.7px;top:1295.300px;width:6px;height:3.800px;background:#fff;"></div>
<div class="a" style="left:308px;top:1305px;width:104px;height:104px;background:#fff;border:3px solid #d0d365;"></div>
<svg style="left:312.0px;top:1309.0px;overflow:hidden" width="96" height="96" viewBox="0 0 96 96"><use href="#tscene" transform="translate(0,-3) scale(1)"/><g transform="translate(50,87) scale(0.95) rotate(8)"><path d="M-4.500 -23L4.800 -23L4 -15L-4 -8L-8 -3L-10 -5L-6 -12L-1 -16L2 -12L4 -2L1.500 -2L-0.500 -11z" fill="#1b1b22"/><path d="M-11 -5l2.500 2.500l-1.500 1.800l-2.500 -2.500zM1.300 -2h3l1.500 2h-4.500z" fill="#dcae92"/><path d="M-5 -22.500L-5.800 -36Q-5 -39.500 -1 -40L3.500 -39.500Q6 -38 5.800 -34L5.200 -22.500z" fill="#a3abba"/><ellipse cx="-2.500" cy="-43" rx="2.700" ry="3.200" fill="#dcae92"/><path d="M-5.200 -43.500Q-5.500 -47 -2 -46.800Q0.300 -46.500 0.300 -44Q-2 -45.500 -3.500 -43z" fill="#33261f"/></g><g transform="translate(60,53) rotate(18) scale(0.95)"><path d="M-9 -2.500Q0 -3.500 8 -2L18 -10L20 -8.500L14 0L17 5Q14 14 3 17Q4 8 2 3.500L-8 2z" fill="#f6efec"/><path d="M18 -10L23 -16.500L24.500 -15.500L20 -8.500zM15.500 3L24 7.500L23.300 9L14.500 5z" fill="#dcae92"/><ellipse cx="-12" cy="-3" rx="2.500" ry="2.900" fill="#dcae92"/><path d="M-13.500 -5.500Q-11 -7 -9.300 -5Q-8.500 -2 -9.500 2L-11 0Q-10.500 -3 -13.500 -5.500z" fill="#c9aa7c"/><path d="M-8 1L-6 9L-4.500 8.500L-5.500 1z" fill="#dcae92"/></g><rect x="54" y="74.500" width="42" height="21.500" fill="#0c0c0c"/><rect x="57" y="78" width="18" height="16" fill="#050505" stroke="#8c8c8c" stroke-width="1.200"/><rect x="60.500" y="81.500" width="11" height="9" fill="none" stroke="#8c8c8c" stroke-width=".9" stroke-dasharray="1.800 .9"/><rect x="77.500" y="78" width="16.500" height="16" fill="#050505" stroke="#8c8c8c" stroke-width="1.200"/><path d="M93.400 78.600V93.400H78.100z" fill="#9a9a9a"/><path d="M79.500 82.300h5M82 79.800v5" stroke="#bdbdbd" stroke-width="1.100"/><path d="M87.500 90.500h4" stroke="#222" stroke-width="1.100"/></svg>
<svg style="left:310.2px;top:1413px" width="8" height="8" viewBox="0 0 10 10"><path d="M5 0l1.300 3.600l3.700 .1l-2.900 2.300l1 3.700l-3.100-2.100l-3.100 2.100l1-3.700l-2.900-2.300l3.700-.1z" fill="#0a0a0a"/></svg>
<div class="a" style="left:426.4px;top:1290.600px;width:131.800px;height:133.300px;background:#cbcbcb;border:1px solid #dadada;border-right-color:#b4b4b4;border-bottom-color:#b9b9b9"></div>
<div class="a" style="left:558.2px;top:1290.600px;width:1.600px;height:133.300px;background:#7a7a7a"></div>
<div class="a" style="left:429.1px;top:1295.300px;width:6px;height:3.800px;background:#fff;"></div>
<div class="a" style="left:441px;top:1305px;width:104px;height:104px;background:#fff;border:3px solid #d0d365;"></div>
<svg style="left:445.0px;top:1309.0px;overflow:hidden" width="96" height="96" viewBox="0 0 96 96"><use href="#tscene" transform="translate(0,-3) scale(1)"/><g transform="translate(50,87) scale(0.95) rotate(5)"><path d="M-4.500 -23L4.800 -23L4 -15L-4 -8L-8 -3L-10 -5L-6 -12L-1 -16L2 -12L4 -2L1.500 -2L-0.500 -11z" fill="#1b1b22"/><path d="M-11 -5l2.500 2.500l-1.500 1.800l-2.500 -2.500zM1.300 -2h3l1.500 2h-4.500z" fill="#dcae92"/><path d="M-5 -22.500L-5.800 -36Q-5 -39.500 -1 -40L3.500 -39.500Q6 -38 5.800 -34L5.200 -22.500z" fill="#a3abba"/><path d="M-4.500 -38L-3 -50L-1.200 -50L-1 -38zM2 -38.500L4.500 -50L6.200 -49.500L5.500 -37z" fill="#dcae92"/><path d="M-5.800 -36L-4.300 -43L-1 -42.500L-1 -37zM1.800 -38L3 -43.500L6 -43L5.800 -35z" fill="#a3abba"/><ellipse cx="-2.500" cy="-43" rx="2.700" ry="3.200" fill="#dcae92"/><path d="M-5.200 -43.500Q-5.500 -47 -2 -46.800Q0.300 -46.500 0.300 -44Q-2 -45.500 -3.500 -43z" fill="#33261f"/></g><g transform="translate(57,44) rotate(35) scale(0.9)"><path d="M-9 -2.500Q0 -3.500 8 -2L18 -10L20 -8.500L14 0L17 5Q14 14 3 17Q4 8 2 3.500L-8 2z" fill="#f6efec"/><path d="M18 -10L23 -16.500L24.500 -15.500L20 -8.500zM15.500 3L24 7.500L23.300 9L14.500 5z" fill="#dcae92"/><ellipse cx="-12" cy="-3" rx="2.500" ry="2.900" fill="#dcae92"/><path d="M-13.500 -5.500Q-11 -7 -9.300 -5Q-8.500 -2 -9.500 2L-11 0Q-10.500 -3 -13.500 -5.500z" fill="#c9aa7c"/><path d="M-8 1L-6 9L-4.500 8.500L-5.500 1z" fill="#dcae92"/></g><rect x="54" y="74.500" width="42" height="21.500" fill="#0c0c0c"/><rect x="57" y="78" width="18" height="16" fill="#050505" stroke="#8c8c8c" stroke-width="1.200"/><rect x="60.500" y="81.500" width="11" height="9" fill="none" stroke="#8c8c8c" stroke-width=".9" stroke-dasharray="1.800 .9"/><rect x="77.500" y="78" width="16.500" height="16" fill="#050505" stroke="#8c8c8c" stroke-width="1.200"/><path d="M93.400 78.600V93.400H78.100z" fill="#9a9a9a"/><path d="M79.500 82.300h5M82 79.800v5" stroke="#bdbdbd" stroke-width="1.100"/><path d="M87.500 90.500h4" stroke="#222" stroke-width="1.100"/></svg>
<svg style="left:443.6px;top:1413px" width="8" height="8" viewBox="0 0 10 10"><path d="M5 0l1.300 3.600l3.700 .1l-2.900 2.300l1 3.700l-3.100-2.100l-3.100 2.100l1-3.700l-2.900-2.300l3.700-.1z" fill="#0a0a0a"/></svg>
<div class="a" style="left:559.8px;top:1290.600px;width:131.800px;height:133.300px;background:#cbcbcb;border:1px solid #dadada;border-right-color:#b4b4b4;border-bottom-color:#b9b9b9"></div>
<div class="a" style="left:691.6px;top:1290.600px;width:1.600px;height:133.300px;background:#7a7a7a"></div>
<div class="a" style="left:562.5px;top:1295.300px;width:6px;height:3.800px;background:#fff;"></div>
<div class="a" style="left:575px;top:1305px;width:104px;height:104px;background:#fff;border:3px solid #d0d365;"></div>
<svg style="left:579.0px;top:1309.0px;overflow:hidden" width="96" height="96" viewBox="0 0 96 96"><use href="#tscene" transform="translate(0,-4) scale(1)"/><g transform="translate(50,88) scale(0.98) rotate(3)"><path d="M-4.500 -23L4.800 -23L5 -12L3.200 -1L0.500 -1L1 -11L-0.500 -15L-3 -1L-5.800 -1L-5.500 -12z" fill="#1b1b22"/><path d="M-6.500 -1.200h4v2.200h-5zM0.500 -1.200h3.500l1.500 2.200h-5z" fill="#dcae92"/><path d="M-5 -22.500L-5.800 -36Q-5 -39.500 -1 -40L3.500 -39.500Q6 -38 5.800 -34L5.200 -22.500z" fill="#a3abba"/><path d="M-4.500 -38L-3 -50L-1.200 -50L-1 -38zM2 -38.500L4.500 -50L6.200 -49.500L5.500 -37z" fill="#dcae92"/><path d="M-5.800 -36L-4.300 -43L-1 -42.500L-1 -37zM1.800 -38L3 -43.500L6 -43L5.800 -35z" fill="#a3abba"/><ellipse cx="-2.500" cy="-43" rx="2.700" ry="3.200" fill="#dcae92"/><path d="M-5.200 -43.500Q-5.500 -47 -2 -46.800Q0.300 -46.500 0.300 -44Q-2 -45.500 -3.500 -43z" fill="#33261f"/></g><g transform="translate(56,36) rotate(30) scale(0.95)"><path d="M-9 -2.500Q0 -3.500 8 -2L18 -10L20 -8.500L14 0L17 5Q14 16 3 19Q4 8 2 3.500L-8 2z" fill="#f6efec"/><path d="M18 -10L23 -16.500L24.500 -15.500L20 -8.500zM15.500 3L24 7.500L23.300 9L14.500 5z" fill="#dcae92"/><ellipse cx="-12" cy="-3" rx="2.500" ry="2.900" fill="#dcae92"/><path d="M-13.500 -5.500Q-11 -7 -9.300 -5Q-8.500 -2 -9.500 2L-11 0Q-10.500 -3 -13.500 -5.500z" fill="#c9aa7c"/><path d="M-8 1L-6 9L-4.500 8.500L-5.500 1z" fill="#dcae92"/></g><rect x="54" y="74.500" width="42" height="21.500" fill="#0c0c0c"/><rect x="57" y="78" width="18" height="16" fill="#050505" stroke="#8c8c8c" stroke-width="1.200"/><rect x="60.500" y="81.500" width="11" height="9" fill="none" stroke="#8c8c8c" stroke-width=".9" stroke-dasharray="1.800 .9"/><rect x="77.500" y="78" width="16.500" height="16" fill="#050505" stroke="#8c8c8c" stroke-width="1.200"/><path d="M93.400 78.600V93.400H78.100z" fill="#9a9a9a"/><path d="M79.500 82.300h5M82 79.800v5" stroke="#bdbdbd" stroke-width="1.100"/><path d="M87.500 90.500h4" stroke="#222" stroke-width="1.100"/></svg>
<svg style="left:577.0px;top:1413px" width="8" height="8" viewBox="0 0 10 10"><path d="M5 0l1.300 3.600l3.700 .1l-2.900 2.300l1 3.700l-3.100-2.100l-3.100 2.100l1-3.700l-2.900-2.300l3.700-.1z" fill="#0a0a0a"/></svg>
<div class="a" style="left:693.2px;top:1290.600px;width:131.800px;height:133.300px;background:#e9e9e9;border:1px solid #f4f4f4;border-right-color:#b4b4b4;border-bottom-color:#b9b9b9"></div>
<div class="a" style="left:825.0px;top:1290.600px;width:1.600px;height:133.300px;background:#7a7a7a"></div>
<div class="a" style="left:695.9px;top:1295.300px;width:6px;height:3.800px;background:#fff;"></div>
<div class="a" style="left:708px;top:1305px;width:104px;height:104px;background:#fff;border:3px solid #d0d365;"></div>
<svg style="left:712.0px;top:1309.0px;overflow:hidden" width="96" height="96" viewBox="0 0 96 96"><use href="#tscene" transform="translate(0,-3) scale(1)"/><g transform="translate(50,90) scale(1.0) rotate(2)"><path d="M-4.500 -23L4.800 -23L5 -12L3.200 -1L0.500 -1L1 -11L-0.500 -15L-3 -1L-5.800 -1L-5.500 -12z" fill="#1b1b22"/><path d="M-6.500 -1.200h4v2.200h-5zM0.500 -1.200h3.500l1.500 2.200h-5z" fill="#dcae92"/><path d="M-5 -22.500L-5.800 -36Q-5 -39.500 -1 -40L3.500 -39.500Q6 -38 5.800 -34L5.200 -22.500z" fill="#a3abba"/><path d="M-4.500 -38L-3 -50L-1.200 -50L-1 -38zM2 -38.500L4.500 -50L6.200 -49.500L5.500 -37z" fill="#dcae92"/><path d="M-5.800 -36L-4.300 -43L-1 -42.500L-1 -37zM1.800 -38L3 -43.500L6 -43L5.800 -35z" fill="#a3abba"/><ellipse cx="-2.500" cy="-43" rx="2.700" ry="3.200" fill="#dcae92"/><path d="M-5.200 -43.500Q-5.500 -47 -2 -46.800Q0.300 -46.500 0.300 -44Q-2 -45.500 -3.500 -43z" fill="#33261f"/></g><g transform="translate(52,34) rotate(8) scale(1.0)"><path d="M-9 -2.500Q0 -3.500 8 -2L18 -10L20 -8.500L14 0L17 5Q14 16 3 19Q4 8 2 3.500L-8 2z" fill="#f6efec"/><path d="M18 -10L23 -16.500L24.500 -15.500L20 -8.500zM15.500 3L24 7.500L23.300 9L14.500 5z" fill="#dcae92"/><ellipse cx="-12" cy="-3" rx="2.500" ry="2.900" fill="#dcae92"/><path d="M-13.500 -5.500Q-11 -7 -9.300 -5Q-8.500 -2 -9.500 2L-11 0Q-10.500 -3 -13.500 -5.500z" fill="#c9aa7c"/><path d="M-8 1L-6 9L-4.500 8.500L-5.500 1z" fill="#dcae92"/></g><rect x="54" y="74.500" width="42" height="21.500" fill="#0c0c0c"/><rect x="57" y="78" width="18" height="16" fill="#050505" stroke="#8c8c8c" stroke-width="1.200"/><rect x="60.500" y="81.500" width="11" height="9" fill="none" stroke="#8c8c8c" stroke-width=".9" stroke-dasharray="1.800 .9"/><rect x="77.500" y="78" width="16.500" height="16" fill="#050505" stroke="#8c8c8c" stroke-width="1.200"/><path d="M93.400 78.600V93.400H78.100z" fill="#9a9a9a"/><path d="M79.500 82.300h5M82 79.800v5" stroke="#bdbdbd" stroke-width="1.100"/><path d="M87.500 90.500h4" stroke="#222" stroke-width="1.100"/></svg>
<svg style="left:710.4px;top:1413px" width="8" height="8" viewBox="0 0 10 10"><path d="M5 0l1.300 3.600l3.700 .1l-2.900 2.300l1 3.700l-3.100-2.100l-3.100 2.100l1-3.700l-2.900-2.300l3.700-.1z" fill="#0a0a0a"/></svg>
<div class="a" style="left:713.5px;top:1311.3px;width:32px;height:31.500px;background:#e9e9e9;border:1.600px solid #1a1a1a;box-shadow:1px 1px 2px rgba(0,0,0,.4)"></div><span class="t" style="left:724.7px;top:1318.8px;font-size:17px;color:#4a4a4a;transform:scaleX(.92)">2</span>
<div class="a" style="left:826.6px;top:1290.600px;width:131.800px;height:133.300px;background:#cbcbcb;border:1px solid #dadada;border-right-color:#b4b4b4;border-bottom-color:#b9b9b9"></div>
<div class="a" style="left:958.4px;top:1290.600px;width:1.600px;height:133.300px;background:#7a7a7a"></div>
<div class="a" style="left:829.3px;top:1295.300px;width:6px;height:3.800px;background:#fff;"></div>
<div class="a" style="left:841px;top:1305px;width:104px;height:104px;background:#fff;border:3px solid #d0d365;"></div>
<svg style="left:845.0px;top:1309.0px;overflow:hidden" width="96" height="96" viewBox="0 0 96 96"><use href="#tscene" transform="translate(0,-3) scale(1)"/><g transform="translate(46,91) scale(1.02) rotate(2)"><path d="M-4.500 -23L4.800 -23L5 -12L3.200 -1L0.500 -1L1 -11L-0.500 -15L-3 -1L-5.800 -1L-5.500 -12z" fill="#1b1b22"/><path d="M-6.500 -1.200h4v2.200h-5zM0.500 -1.200h3.500l1.500 2.200h-5z" fill="#dcae92"/><path d="M-5 -22.500L-5.800 -36Q-5 -39.500 -1 -40L3.500 -39.500Q6 -38 5.800 -34L5.200 -22.500z" fill="#a3abba"/><path d="M-4.500 -38L-3 -50L-1.200 -50L-1 -38zM2 -38.500L4.500 -50L6.200 -49.500L5.500 -37z" fill="#dcae92"/><path d="M-5.800 -36L-4.300 -43L-1 -42.500L-1 -37zM1.800 -38L3 -43.500L6 -43L5.800 -35z" fill="#a3abba"/><ellipse cx="-2.500" cy="-43" rx="2.700" ry="3.200" fill="#dcae92"/><path d="M-5.200 -43.500Q-5.500 -47 -2 -46.800Q0.300 -46.500 0.300 -44Q-2 -45.500 -3.500 -43z" fill="#33261f"/></g><g transform="translate(48,35) rotate(-2) scale(1.0)"><path d="M-9 -2.500Q0 -3.500 8 -2L18 -10L20 -8.500L14 0L17 5Q14 16 3 19Q4 8 2 3.500L-8 2z" fill="#f6efec"/><path d="M18 -10L23 -16.500L24.500 -15.500L20 -8.500zM15.500 3L24 7.500L23.300 9L14.500 5z" fill="#dcae92"/><ellipse cx="-12" cy="-3" rx="2.500" ry="2.900" fill="#dcae92"/><path d="M-13.500 -5.500Q-11 -7 -9.300 -5Q-8.500 -2 -9.500 2L-11 0Q-10.500 -3 -13.500 -5.500z" fill="#c9aa7c"/><path d="M-8 1L-6 9L-4.500 8.500L-5.500 1z" fill="#dcae92"/></g><rect x="54" y="74.500" width="42" height="21.500" fill="#0c0c0c"/><rect x="57" y="78" width="18" height="16" fill="#050505" stroke="#8c8c8c" stroke-width="1.200"/><rect x="60.500" y="81.500" width="11" height="9" fill="none" stroke="#8c8c8c" stroke-width=".9" stroke-dasharray="1.800 .9"/><rect x="77.500" y="78" width="16.500" height="16" fill="#050505" stroke="#8c8c8c" stroke-width="1.200"/><path d="M93.400 78.600V93.400H78.100z" fill="#9a9a9a"/><path d="M79.500 82.300h5M82 79.800v5" stroke="#bdbdbd" stroke-width="1.100"/><path d="M87.500 90.500h4" stroke="#222" stroke-width="1.100"/></svg>
<svg style="left:843.8px;top:1413px" width="8" height="8" viewBox="0 0 10 10"><path d="M5 0l1.300 3.600l3.700 .1l-2.900 2.300l1 3.700l-3.100-2.100l-3.100 2.100l1-3.700l-2.900-2.300l3.700-.1z" fill="#0a0a0a"/></svg>
<div class="a" style="left:960.0px;top:1290.600px;width:131.800px;height:133.300px;background:#cbcbcb;border:1px solid #dadada;border-right-color:#b4b4b4;border-bottom-color:#b9b9b9"></div>
<div class="a" style="left:1091.8px;top:1290.600px;width:1.600px;height:133.300px;background:#7a7a7a"></div>
<div class="a" style="left:962.7px;top:1295.300px;width:6px;height:3.800px;background:#fff;"></div>
<div class="a" style="left:975px;top:1305px;width:104px;height:104px;background:#fff;border:3px solid #d0d365;"></div>
<svg style="left:979.0px;top:1309.0px;overflow:hidden" width="96" height="96" viewBox="0 0 96 96"><use href="#tscene" transform="translate(0,-5) scale(1)"/><g transform="translate(41,91) scale(1.02) rotate(2)"><path d="M-4.500 -23L4.800 -23L5 -12L3.200 -1L0.500 -1L1 -11L-0.500 -15L-3 -1L-5.800 -1L-5.500 -12z" fill="#1b1b22"/><path d="M-6.500 -1.200h4v2.200h-5zM0.500 -1.200h3.500l1.500 2.200h-5z" fill="#dcae92"/><path d="M-5 -22.500L-5.800 -36Q-5 -39.500 -1 -40L3.500 -39.500Q6 -38 5.800 -34L5.200 -22.500z" fill="#a3abba"/><path d="M-4.500 -38L-3 -50L-1.200 -50L-1 -38zM2 -38.500L4.500 -50L6.200 -49.500L5.500 -37z" fill="#dcae92"/><path d="M-5.800 -36L-4.300 -43L-1 -42.500L-1 -37zM1.800 -38L3 -43.500L6 -43L5.800 -35z" fill="#a3abba"/><ellipse cx="-2.500" cy="-43" rx="2.700" ry="3.200" fill="#dcae92"/><path d="M-5.200 -43.500Q-5.500 -47 -2 -46.800Q0.300 -46.500 0.300 -44Q-2 -45.500 -3.500 -43z" fill="#33261f"/></g><g transform="translate(46,33) rotate(-8) scale(0.95)"><path d="M-9 -2.500Q0 -3.500 8 -2L18 -10L20 -8.500L14 0L17 5Q14 18 3 21Q4 8 2 3.500L-8 2z" fill="#f6efec"/><path d="M18 -10L23 -16.500L24.500 -15.500L20 -8.500zM15.500 3L24 7.500L23.300 9L14.500 5z" fill="#dcae92"/><ellipse cx="-12" cy="-3" rx="2.500" ry="2.900" fill="#dcae92"/><path d="M-13.500 -5.500Q-11 -7 -9.300 -5Q-8.500 -2 -9.500 2L-11 0Q-10.500 -3 -13.500 -5.500z" fill="#c9aa7c"/><path d="M-8 1L-6 9L-4.500 8.500L-5.500 1z" fill="#dcae92"/></g><rect x="54" y="74.500" width="42" height="21.500" fill="#0c0c0c"/><rect x="57" y="78" width="18" height="16" fill="#050505" stroke="#8c8c8c" stroke-width="1.200"/><rect x="60.500" y="81.500" width="11" height="9" fill="none" stroke="#8c8c8c" stroke-width=".9" stroke-dasharray="1.800 .9"/><rect x="77.500" y="78" width="16.500" height="16" fill="#050505" stroke="#8c8c8c" stroke-width="1.200"/><path d="M93.400 78.600V93.400H78.100z" fill="#9a9a9a"/><path d="M79.500 82.300h5M82 79.800v5" stroke="#bdbdbd" stroke-width="1.100"/><path d="M87.500 90.500h4" stroke="#222" stroke-width="1.100"/></svg>
<svg style="left:977.2px;top:1413px" width="8" height="8" viewBox="0 0 10 10"><path d="M5 0l1.300 3.600l3.700 .1l-2.900 2.300l1 3.700l-3.100-2.100l-3.100 2.100l1-3.700l-2.900-2.300l3.700-.1z" fill="#0a0a0a"/></svg>
<div class="a" style="left:980.5px;top:1311.3px;width:32px;height:31.500px;background:#e9e9e9;border:1.600px solid #1a1a1a;box-shadow:1px 1px 2px rgba(0,0,0,.4)"></div><span class="t" style="left:991.7px;top:1318.8px;font-size:17px;color:#4a4a4a;transform:scaleX(.92)">2</span>
<div class="a" style="left:1093.4px;top:1290.600px;width:131.800px;height:133.300px;background:#cbcbcb;border:1px solid #dadada;border-right-color:#b4b4b4;border-bottom-color:#b9b9b9"></div>
<div class="a" style="left:1225.2px;top:1290.600px;width:1.600px;height:133.300px;background:#7a7a7a"></div>
<div class="a" style="left:1096.1px;top:1295.300px;width:6px;height:3.800px;background:#fff;"></div>
<div class="a" style="left:1108px;top:1305px;width:104px;height:104px;background:#fff;border:3px solid #d0d365;"></div>
<svg style="left:1112.0px;top:1309.0px;overflow:hidden" width="96" height="96" viewBox="0 0 96 96"><use href="#tscene" transform="translate(2,-1) scale(1.05)"/><g transform="translate(40,94) scale(1.04) rotate(1)"><path d="M-4.500 -23L4.800 -23L5 -12L3.200 -1L0.500 -1L1 -11L-0.500 -15L-3 -1L-5.800 -1L-5.500 -12z" fill="#1b1b22"/><path d="M-6.500 -1.200h4v2.200h-5zM0.500 -1.200h3.500l1.500 2.200h-5z" fill="#dcae92"/><path d="M-5 -22.500L-5.800 -36Q-5 -39.500 -1 -40L3.500 -39.500Q6 -38 5.800 -34L5.200 -22.500z" fill="#a3abba"/><path d="M-4.500 -38L-3 -50L-1.200 -50L-1 -38zM2 -38.500L4.500 -50L6.200 -49.500L5.500 -37z" fill="#dcae92"/><path d="M-5.800 -36L-4.300 -43L-1 -42.500L-1 -37zM1.800 -38L3 -43.500L6 -43L5.800 -35z" fill="#a3abba"/><ellipse cx="-2.500" cy="-43" rx="2.700" ry="3.200" fill="#dcae92"/><path d="M-5.200 -43.500Q-5.500 -47 -2 -46.800Q0.300 -46.500 0.300 -44Q-2 -45.500 -3.500 -43z" fill="#33261f"/></g><g transform="translate(45,41) rotate(10) scale(0.95)"><path d="M-9 -2.500Q0 -3.500 8 -2L18 -10L20 -8.500L14 0L17 5Q14 18 3 21Q4 8 2 3.500L-8 2z" fill="#f6efec"/><path d="M18 -10L23 -16.500L24.500 -15.500L20 -8.500zM15.500 3L24 7.500L23.300 9L14.500 5z" fill="#dcae92"/><ellipse cx="-12" cy="-3" rx="2.500" ry="2.900" fill="#dcae92"/><path d="M-13.500 -5.500Q-11 -7 -9.300 -5Q-8.500 -2 -9.500 2L-11 0Q-10.500 -3 -13.500 -5.500z" fill="#c9aa7c"/><path d="M-8 1L-6 9L-4.500 8.500L-5.500 1z" fill="#dcae92"/></g><rect x="54" y="74.500" width="42" height="21.500" fill="#0c0c0c"/><rect x="57" y="78" width="18" height="16" fill="#050505" stroke="#8c8c8c" stroke-width="1.200"/><rect x="60.500" y="81.500" width="11" height="9" fill="none" stroke="#8c8c8c" stroke-width=".9" stroke-dasharray="1.800 .9"/><rect x="77.500" y="78" width="16.500" height="16" fill="#050505" stroke="#8c8c8c" stroke-width="1.200"/><path d="M93.400 78.600V93.400H78.100z" fill="#9a9a9a"/><path d="M79.500 82.300h5M82 79.800v5" stroke="#bdbdbd" stroke-width="1.100"/><path d="M87.500 90.500h4" stroke="#222" stroke-width="1.100"/></svg>
<svg style="left:1110.6px;top:1413px" width="8" height="8" viewBox="0 0 10 10"><path d="M5 0l1.300 3.600l3.700 .1l-2.900 2.300l1 3.700l-3.100-2.100l-3.100 2.100l1-3.700l-2.900-2.300l3.700-.1z" fill="#0a0a0a"/></svg>
<div class="a" style="left:1226.8px;top:1290.600px;width:131.800px;height:133.300px;background:#cbcbcb;border:1px solid #dadada;border-right-color:#b4b4b4;border-bottom-color:#b9b9b9"></div>
<div class="a" style="left:1358.6px;top:1290.600px;width:1.600px;height:133.300px;background:#7a7a7a"></div>
<div class="a" style="left:1229.5px;top:1295.300px;width:6px;height:3.800px;background:#fff;"></div>
<div class="a" style="left:1242px;top:1305px;width:104px;height:104px;background:#fff;border:3px solid #d0d365;"></div>
<svg style="left:1246.0px;top:1309.0px;overflow:hidden" width="96" height="96" viewBox="0 0 96 96"><use href="#tscene" transform="translate(0,-2) scale(1.05)"/><g transform="translate(39,93) scale(1.04) rotate(1)"><path d="M-4.500 -23L4.800 -23L5 -12L3.200 -1L0.500 -1L1 -11L-0.500 -15L-3 -1L-5.800 -1L-5.500 -12z" fill="#1b1b22"/><path d="M-6.500 -1.200h4v2.200h-5zM0.500 -1.200h3.500l1.500 2.200h-5z" fill="#dcae92"/><path d="M-5 -22.500L-5.800 -36Q-5 -39.500 -1 -40L3.500 -39.500Q6 -38 5.800 -34L5.200 -22.500z" fill="#a3abba"/><path d="M-4.500 -38L-3 -50L-1.200 -50L-1 -38zM2 -38.500L4.500 -50L6.200 -49.500L5.500 -37z" fill="#dcae92"/><path d="M-5.800 -36L-4.300 -43L-1 -42.500L-1 -37zM1.800 -38L3 -43.500L6 -43L5.800 -35z" fill="#a3abba"/><ellipse cx="-2.500" cy="-43" rx="2.700" ry="3.200" fill="#dcae92"/><path d="M-5.200 -43.500Q-5.500 -47 -2 -46.800Q0.300 -46.500 0.300 -44Q-2 -45.500 -3.500 -43z" fill="#33261f"/></g><g transform="translate(47,49) rotate(50) scale(0.9)"><path d="M-9 -2.500Q0 -3.500 8 -2L18 -10L20 -8.500L14 0L17 5Q14 12 3 15Q4 8 2 3.500L-8 2z" fill="#f6efec"/><path d="M18 -10L23 -16.500L24.500 -15.500L20 -8.500zM15.500 3L24 7.500L23.300 9L14.500 5z" fill="#dcae92"/><ellipse cx="-12" cy="-3" rx="2.500" ry="2.900" fill="#dcae92"/><path d="M-13.500 -5.500Q-11 -7 -9.300 -5Q-8.500 -2 -9.500 2L-11 0Q-10.500 -3 -13.500 -5.500z" fill="#c9aa7c"/><path d="M-8 1L-6 9L-4.500 8.500L-5.500 1z" fill="#dcae92"/></g><rect x="54" y="74.500" width="42" height="21.500" fill="#0c0c0c"/><rect x="57" y="78" width="18" height="16" fill="#050505" stroke="#8c8c8c" stroke-width="1.200"/><rect x="60.500" y="81.500" width="11" height="9" fill="none" stroke="#8c8c8c" stroke-width=".9" stroke-dasharray="1.800 .9"/><rect x="77.500" y="78" width="16.500" height="16" fill="#050505" stroke="#8c8c8c" stroke-width="1.200"/><path d="M93.400 78.600V93.400H78.100z" fill="#9a9a9a"/><path d="M79.500 82.300h5M82 79.800v5" stroke="#bdbdbd" stroke-width="1.100"/><path d="M87.500 90.500h4" stroke="#222" stroke-width="1.100"/></svg>
<svg style="left:1244.0px;top:1413px" width="8" height="8" viewBox="0 0 10 10"><path d="M5 0l1.300 3.600l3.700 .1l-2.900 2.300l1 3.700l-3.100-2.100l-3.100 2.100l1-3.700l-2.900-2.300l3.700-.1z" fill="#0a0a0a"/></svg>
<div class="a" style="left:1360.2px;top:1290.600px;width:131.800px;height:133.300px;background:#cbcbcb;border:1px solid #dadada;border-right-color:#b4b4b4;border-bottom-color:#b9b9b9"></div>
<div class="a" style="left:1492.0px;top:1290.600px;width:1.600px;height:133.300px;background:#7a7a7a"></div>
<div class="a" style="left:1362.9px;top:1295.300px;width:6px;height:3.800px;background:#fff;"></div>
<div class="a" style="left:1375px;top:1305px;width:104px;height:104px;background:#fff;border:3px solid #d0d365;"></div>
<svg style="left:1379.0px;top:1309.0px;overflow:hidden" width="96" height="96" viewBox="0 0 96 96"><use href="#tscene" transform="translate(0,-2) scale(1.05)"/><g transform="translate(39,93) scale(1.04) rotate(2)"><path d="M-4.500 -23L4.800 -23L5 -12L3.200 -1L0.500 -1L1 -11L-0.500 -15L-3 -1L-5.800 -1L-5.500 -12z" fill="#1b1b22"/><path d="M-6.500 -1.200h4v2.200h-5zM0.500 -1.200h3.500l1.500 2.200h-5z" fill="#dcae92"/><path d="M-5 -22.500L-5.800 -36Q-5 -39.500 -1 -40L3.500 -39.500Q6 -38 5.800 -34L5.200 -22.500z" fill="#a3abba"/><ellipse cx="-2.500" cy="-43" rx="2.700" ry="3.200" fill="#dcae92"/><path d="M-5.200 -43.500Q-5.500 -47 -2 -46.800Q0.300 -46.500 0.300 -44Q-2 -45.500 -3.500 -43z" fill="#33261f"/></g><path d="M42 48L47 46L52 56L58 70L54 76L47 72L44 60z" fill="#f6efec"/><ellipse cx="43.500" cy="41.500" rx="2.500" ry="3" fill="#dcae92"/><path d="M42 39Q46 38 46.500 42L45.500 46Q45 42 42 39z" fill="#c9aa7c"/><rect x="54" y="74.500" width="42" height="21.500" fill="#0c0c0c"/><rect x="57" y="78" width="18" height="16" fill="#050505" stroke="#8c8c8c" stroke-width="1.200"/><rect x="60.500" y="81.500" width="11" height="9" fill="none" stroke="#8c8c8c" stroke-width=".9" stroke-dasharray="1.800 .9"/><rect x="77.500" y="78" width="16.500" height="16" fill="#050505" stroke="#8c8c8c" stroke-width="1.200"/><path d="M93.400 78.600V93.400H78.100z" fill="#9a9a9a"/><path d="M79.500 82.300h5M82 79.800v5" stroke="#bdbdbd" stroke-width="1.100"/><path d="M87.500 90.500h4" stroke="#222" stroke-width="1.100"/></svg>
<svg style="left:1377.4px;top:1413px" width="8" height="8" viewBox="0 0 10 10"><path d="M5 0l1.300 3.600l3.700 .1l-2.900 2.300l1 3.700l-3.100-2.100l-3.100 2.100l1-3.700l-2.900-2.300l3.700-.1z" fill="#0a0a0a"/></svg>
<div class="a" style="left:1493.6px;top:1290.600px;width:131.800px;height:133.300px;background:#cbcbcb;border:1px solid #dadada;border-right-color:#b4b4b4;border-bottom-color:#b9b9b9"></div>
<div class="a" style="left:1625.4px;top:1290.600px;width:1.600px;height:133.300px;background:#7a7a7a"></div>
<div class="a" style="left:1496.3px;top:1295.300px;width:6px;height:3.800px;background:#fff;"></div>
<div class="a" style="left:1508px;top:1305px;width:104px;height:104px;background:#fff;border:3px solid #d0d365;"></div>
<svg style="left:1512.0px;top:1309.0px;overflow:hidden" width="96" height="96" viewBox="0 0 96 96"><use href="#tscene" transform="translate(-8,-3) scale(1.15)"/><g transform="translate(37,92) scale(1.0) rotate(-6)"><path d="M-4.500 -23L4.800 -23L7 -16L3 -10L3.500 -2L1 -2L0 -11L-1 -14L-5 -10L-5.500 -2L-8 -2L-8 -12z" fill="#1b1b22"/><path d="M-9 -2h4v2h-5zM0.500 -2h3.500l1.500 2h-5z" fill="#dcae92"/><path d="M-5 -22.500L-5.800 -36Q-5 -39.500 -1 -40L3.500 -39.500Q6 -38 5.800 -34L5.200 -22.500z" fill="#a3abba"/><ellipse cx="-2.500" cy="-43" rx="2.700" ry="3.200" fill="#dcae92"/><path d="M-5.200 -43.500Q-5.500 -47 -2 -46.800Q0.300 -46.500 0.300 -44Q-2 -45.500 -3.500 -43z" fill="#33261f"/></g><g transform="translate(54,93) scale(1.05,1.05)"><path d="M-2.500 -34L2.500 -34L3.500 -24L8 -2L-7 -2L-3 -24z" fill="#f6efec"/><path d="M-3 -33L-9 -27L-8 -25.500L-2 -30z" fill="#dcae92"/><ellipse cx="-0.500" cy="-37.500" rx="2.500" ry="3" fill="#dcae92"/><path d="M-2.500 -40Q1 -41.500 2.300 -38.500Q3 -35 2 -32L0.500 -34Q1 -38 -2.500 -40z" fill="#c9aa7c"/></g><rect x="54" y="74.500" width="42" height="21.500" fill="#0c0c0c"/><rect x="57" y="78" width="18" height="16" fill="#050505" stroke="#8c8c8c" stroke-width="1.200"/><rect x="60.500" y="81.500" width="11" height="9" fill="none" stroke="#8c8c8c" stroke-width=".9" stroke-dasharray="1.800 .9"/><rect x="77.500" y="78" width="16.500" height="16" fill="#050505" stroke="#8c8c8c" stroke-width="1.200"/><path d="M93.400 78.600V93.400H78.100z" fill="#9a9a9a"/><path d="M79.500 82.300h5M82 79.800v5" stroke="#bdbdbd" stroke-width="1.100"/><path d="M87.500 90.500h4" stroke="#222" stroke-width="1.100"/></svg>
<svg style="left:1510.8px;top:1413px" width="8" height="8" viewBox="0 0 10 10"><path d="M5 0l1.300 3.600l3.700 .1l-2.900 2.300l1 3.700l-3.100-2.100l-3.100 2.100l1-3.700l-2.900-2.300l3.700-.1z" fill="#0a0a0a"/></svg>
<div class="a" style="left:1627.0px;top:1290.600px;width:131.800px;height:133.300px;background:#cbcbcb;border:1px solid #dadada;border-right-color:#b4b4b4;border-bottom-color:#b9b9b9"></div>
<div class="a" style="left:1758.8px;top:1290.600px;width:1.600px;height:133.300px;background:#7a7a7a"></div>
<div class="a" style="left:1629.7px;top:1295.300px;width:6px;height:3.800px;background:#fff;"></div>
<div class="a" style="left:1642px;top:1305px;width:104px;height:104px;background:#fff;border:3px solid #d0d365;"></div>
<svg style="left:1646.0px;top:1309.0px;overflow:hidden" width="96" height="96" viewBox="0 0 96 96"><use href="#tscene" transform="translate(-6,-5) scale(1.12)"/><g transform="translate(40,94) scale(1.15) rotate(-3)"><path d="M-4.500 -23L4.800 -23L5 -12L3.200 -1L0.500 -1L1 -11L-0.500 -15L-3 -1L-5.800 -1L-5.500 -12z" fill="#1b1b22"/><path d="M-6.500 -1.200h4v2.200h-5zM0.500 -1.200h3.500l1.500 2.200h-5z" fill="#dcae92"/><path d="M-5 -22.500L-5.800 -36Q-5 -39.500 -1 -40L3.500 -39.500Q6 -38 5.800 -34L5.200 -22.500z" fill="#a3abba"/><ellipse cx="-2.500" cy="-43" rx="2.700" ry="3.200" fill="#dcae92"/><path d="M-5.200 -43.500Q-5.500 -47 -2 -46.800Q0.300 -46.500 0.300 -44Q-2 -45.500 -3.500 -43z" fill="#33261f"/></g><g transform="translate(59,92) scale(1.12,1.12)"><path d="M-2.500 -34L2.500 -34L3.500 -24L8 -2L-7 -2L-3 -24z" fill="#f6efec"/><path d="M-3 -33L-9 -27L-8 -25.500L-2 -30z" fill="#dcae92"/><ellipse cx="-0.500" cy="-37.500" rx="2.500" ry="3" fill="#dcae92"/><path d="M-2.500 -40Q1 -41.500 2.300 -38.500Q3 -35 2 -32L0.500 -34Q1 -38 -2.500 -40z" fill="#c9aa7c"/></g><rect x="54" y="74.500" width="42" height="21.500" fill="#0c0c0c"/><rect x="57" y="78" width="18" height="16" fill="#050505" stroke="#8c8c8c" stroke-width="1.200"/><rect x="60.500" y="81.500" width="11" height="9" fill="none" stroke="#8c8c8c" stroke-width=".9" stroke-dasharray="1.800 .9"/><rect x="77.500" y="78" width="16.500" height="16" fill="#050505" stroke="#8c8c8c" stroke-width="1.200"/><path d="M93.400 78.600V93.400H78.100z" fill="#9a9a9a"/><path d="M79.500 82.300h5M82 79.800v5" stroke="#bdbdbd" stroke-width="1.100"/><path d="M87.500 90.500h4" stroke="#222" stroke-width="1.100"/></svg>
<svg style="left:1644.2px;top:1413px" width="8" height="8" viewBox="0 0 10 10"><path d="M5 0l1.300 3.600l3.700 .1l-2.900 2.300l1 3.700l-3.100-2.100l-3.100 2.100l1-3.700l-2.900-2.300l3.700-.1z" fill="#0a0a0a"/></svg>

<svg style="left:1628.800px;top:184.300px;overflow:hidden" width="371.600" height="130.200" viewBox="0 0 371.600 130.200">
<defs><linearGradient id="hgr" gradientUnits="userSpaceOnUse" x1="0" y1="0" x2="372" y2="0"><stop offset="0" stop-color="#a8a8a8"/><stop offset=".55" stop-color="#c4c4c4"/><stop offset=".8" stop-color="#e2e2e2"/><stop offset="1" stop-color="#f0f0f0"/></linearGradient></defs>
<rect x="92.9" y="0" width="1" height="130.200" fill="#444"/>
<rect x="185.8" y="0" width="1" height="130.200" fill="#444"/>
<rect x="278.7" y="0" width="1" height="130.200" fill="#444"/>
<polygon points="18.2,128.0 23.7,120.6 30.2,122.8 36.8,124.1 54.3,122.8 80.5,123.2 102.4,121.9 124.3,121.4 146.2,120.6 154.9,121.4 154.9,126.9 18.2,128.9" fill="#3452b8"/>
<polygon points="150.5,123.6 157.1,118.4 163.7,108.3 170.2,102.2 179.0,97.4 184.5,88.6 189.9,77.7 194.3,66.8 198.7,58.0 203.1,53.6 207.0,52.3 209.6,60.2 211.8,75.5 211.8,130.2 150.5,130.2" fill="#4a79d6"/>
<polygon points="139.6,124.9 152.7,122.8 163.7,120.6 174.6,114.9 183.4,106.1 192.1,95.2 198.7,84.3 204.1,68.9 208.5,58.0 211.4,66.8 214.0,77.7 217.3,81.6 218.4,130.2 139.6,130.2" fill="#2fe0e2"/>
<polygon points="207.4,61.3 209.6,49.3 212.9,42.3 218.4,38.3 221.0,40.1 222.3,49.3 220.6,62.4 217.3,75.5 213.6,78.8 210.1,71.1" fill="#57c75a"/>
<polygon points="221.9,49.3 223.2,31.8 225.4,21.9 229.3,16.4 232.6,21.3 234.3,38.3 236.3,58.0 241.3,73.3 247.2,86.4 252.3,95.2 255.6,108.3 258.8,115.8 263.2,118.4 255.6,119.3 249.0,119.7 242.4,110.5 237.0,95.2 231.5,84.3 226.7,73.3 224.1,58.0" fill="#f25252"/>
<polygon points="216.2,86.4 219.5,66.8 221.9,49.3 224.1,58.0 226.7,73.3 231.5,84.3 237.0,95.2 242.4,110.5 247.2,119.3 250.1,121.0 241.3,121.4 234.8,114.9 229.3,101.8 223.8,88.6 219.5,84.3" fill="#f8ea58"/>
<polygon points="262.1,118.4 265.4,115.3 269.1,117.9 276.3,116.2 279.6,114.0 285.1,117.9 286.2,121.4 277.4,122.8 265.4,123.2" fill="#f25252"/>
<polygon points="292.7,118.8 299.3,111.8 305.9,106.1 312.4,98.3 319.0,88.6 323.8,79.9 326.7,74.2 329.9,77.7 326.7,86.4 322.3,95.2 317.9,103.9 310.2,110.5 301.5,116.6 292.7,120.6" fill="#57c75a"/>
<polygon points="310.2,108.3 315.7,101.8 321.2,91.9 326.7,78.8 329.9,77.7 329.1,86.4 324.5,93.0 319.0,103.9 313.5,110.5" fill="#f0e858"/>
<polygon points="329.9,77.7 333.2,66.8 336.9,53.6 339.1,64.6 341.3,66.8 342.4,75.5 338.7,84.3 333.2,82.5" fill="#74a4ff"/>
<polygon points="340.9,75.5 342.4,44.9 343.7,1.1 345.7,-1.1 347.9,1.1 349.2,31.8 346.3,49.3 344.2,66.8 342.0,77.7" fill="#33e2f0"/>
<polygon points="349.2,18.6 351.8,20.4 352.7,40.5 350.9,40.5 349.6,31.8" fill="#f050e0"/>
<polygon points="356.2,20.8 358.8,20.4 360.6,58.0 363.2,110.5 365.4,129.3 360.6,128.9 358.8,121.4 357.5,88.6" fill="#f66"/>
<polygon points="351.8,23.0 354.4,20.4 356.6,20.8 357.5,88.6 356.2,38.3" fill="#f8ea58"/>
<polygon points="357.5,93.0 359.7,101.8 361.9,128.9 358.8,128.9" fill="#f050e0"/>
<polygon points="0.7,130.2 1.8,128.9 18.2,128.4 23.7,121.4 26.9,120.4 31.3,124.1 43.3,125.4 58.7,124.9 80.5,125.4 102.4,124.5 124.3,124.9 146.2,123.6 161.5,121.9 174.6,120.6 189.9,115.3 200.9,106.1 208.5,93.0 214.0,84.3 218.4,80.3 222.7,86.4 228.2,97.4 233.7,110.5 239.1,119.7 246.8,120.6 253.4,117.5 259.9,118.4 265.4,123.2 277.4,122.8 286.2,121.4 292.7,120.6 301.5,116.6 310.2,110.5 317.9,103.9 322.3,95.2 326.7,86.4 329.9,77.7 333.2,82.5 338.7,84.3 342.0,77.7 344.2,66.8 346.3,49.3 349.2,31.8 351.8,23.0 354.4,20.4 356.2,38.3 357.5,88.6 358.8,121.4 360.6,128.9 364.9,130.2" fill="url(#hgr)"/>
<polygon points="263.2,119.7 268.7,121.0 277.4,120.6 281.8,121.4 277.4,124.1 265.4,124.5" fill="#f0e040"/>
<polygon points="1.8,128.9 10.5,128.4 10.5,130.2 1.8,130.2" fill="#c8b820"/>
</svg>
<div class="a" style="left:1628.6px;top:184.100px;width:22.800px;height:19.500px;background:#050505;border:1.200px solid #343434"></div>
<svg style="left:1632.3999999999999px;top:188px" width="15" height="12" viewBox="0 0 15 12"><path d="M7.500 0.500L14.500 11.500H0.500z" fill="#4e4e4e"/></svg>
<div class="a" style="left:1978px;top:184.100px;width:22.800px;height:19.500px;background:#050505;border:1.200px solid #343434"></div>
<svg style="left:1981.8px;top:188px" width="15" height="12" viewBox="0 0 15 12"><path d="M7.500 0.500L14.500 11.500H0.500z" fill="#4e4e4e"/></svg>
<svg style="left:1714px;top:404px" width="28" height="34" viewBox="0 0 28 34">
<g fill="#fff" stroke="#222" stroke-width=".6" paint-order="stroke">
<path d="M7.100 8.100h3.100v15.400h-3.100z"/><path d="M3.900 12h15.900v3.100H3.900z"/><path d="M7.100 20.800h16.500v3H7.100z"/><path d="M17.300 12h3v15.800h-3z"/>
</g>
<path d="M17.500 5.500A8 8 0 0 1 24.500 11.800" fill="none" stroke="#fff" stroke-width="2.600"/>
<path d="M13.800 5.600L19.600 1.400V9.800z" fill="#fff"/>
<path d="M10.500 28.500A8 8 0 0 1 3.500 22.200" fill="none" stroke="#fff" stroke-width="2.600"/>
<path d="M14.200 28.400L8.400 32.600V24.200z" fill="#fff"/>
</svg>
<svg style="left:1775px;top:406px" width="30" height="30" viewBox="0 0 30 30">
<g transform="rotate(-45 14.700 14.900)"><rect x="-1" y="8.200" width="31.500" height="13.400" rx="6.700" fill="#9c9c9c" stroke="#2a2a2a" stroke-width="1"/>
<g fill="#2e2e2e"><circle cx="11.300" cy="14.900" r="1.400"/><circle cx="18.100" cy="14.900" r="1.400"/><circle cx="14.700" cy="11.500" r="1.400"/><circle cx="14.700" cy="18.300" r="1.400"/></g></g>
</svg>
<svg style="left:1838px;top:406px" width="28" height="30" viewBox="0 0 28 30">
<path d="M1.500 7.500h9.500M6.250 2.800v9.500" stroke="#a8a8a8" stroke-width="1.700"/>
<path d="M2.300 19.500Q8 10.800 14.200 10.800Q20.500 10.800 26.200 19.500Q20.500 27.200 14.200 27.200Q8 27.200 2.300 19.500z" fill="#a2a2a2" stroke="#2a2a2a" stroke-width=".8"/>
<circle cx="14.200" cy="19" r="5.800" fill="#2e2e2e"/><circle cx="14.200" cy="19" r="3.500" fill="#a2a2a2"/><circle cx="15.800" cy="17.500" r="1.500" fill="#2e2e2e"/>
</svg>
<svg style="left:1892px;top:407px" width="32" height="32" viewBox="0 0 32 32">
<defs><pattern id="chk" width="2.400" height="2.400" patternUnits="userSpaceOnUse"><rect width="2.400" height="2.400" fill="#3a3a3a"/><rect width="1.200" height="1.200" fill="#8c8c8c"/><rect x="1.200" y="1.200" width="1.200" height="1.200" fill="#8c8c8c"/></pattern></defs>
<circle cx="16" cy="15.700" r="13.600" fill="#2c2c2c"/>
<circle cx="16" cy="15.700" r="10.200" fill="url(#chk)"/>
<circle cx="16" cy="15.700" r="12" fill="none" stroke="#a8a8a8" stroke-width="2.200" stroke-dasharray="4.600 1.680"/>
</svg>
<svg style="left:1625px;top:499px" width="42" height="42" viewBox="0 0 42 42">
<defs><linearGradient id="rg" x1="0" y1="0" x2="0" y2="1"><stop offset="0" stop-color="#b4b4b4"/><stop offset="1" stop-color="#666"/></linearGradient></defs>
<g stroke="#0a0a0a" stroke-width="1.300">
<rect x="5.500" y="10.200" width="25.500" height="6.700" fill="#8a8a8a"/>
<rect x="24.300" y="10.200" width="6.700" height="25.400" fill="#8a8a8a"/>
<rect x="18" y="16.900" width="6.300" height="6.700" fill="#4e4e4e"/>
<path d="M10.100 5.800h8v17.800h16.900v7.500H10.100z" fill="url(#rg)"/>
</g>
<g stroke="#3a3a3a" stroke-width=".9"><path d="M14.500 9.500h3M14.500 12.500h3M14.500 15.500h3M14.500 18.500h3M14.500 21.500h3M20 24.300v2.800M23 24.300v2.800M26 24.300v2.800M29 24.300v2.800M32 24.300v2.800"/></g>
<path d="M35 6.200L19.400 21.800" stroke="#0a0a0a" stroke-width="3.600" stroke-linecap="round"/>
<path d="M35 6.200L19.800 21.400" stroke="#9c9c9c" stroke-width="1.500" stroke-linecap="round"/>
</svg>
<svg style="left:1625px;top:579px" width="42" height="42" viewBox="0 0 42 42">
<path d="M20.8 5.1L20.8 1.8M28.4 7.1L30.1 4.3M34.1 12.7L36.9 11.1M34.1 28.0L36.9 29.7M28.4 33.7L30.1 36.5M20.8 35.7L20.8 39.0M13.1 33.7L11.5 36.5M7.5 28.1L4.7 29.7M7.5 12.7L4.7 11.1M13.1 7.1L11.5 4.3" stroke="#0a0a0a" stroke-width="1.500"/>
<path d="M-0.500 20.400l2 -1.500v3zM42.100 20.400l-2 -1.500v3z" fill="#0a0a0a"/>
<rect x="1.200" y="16.200" width="38.800" height="9" fill="url(#rg)" stroke="#0a0a0a" stroke-width="1.500"/>
<path d="M7 25v-3M13 25v-3M19 25v-2M25 25v-3M31 25v-3M36 25v-2" stroke="#3a3a3a" stroke-width=".9"/>
<rect x="16.600" y="17.500" width="8.400" height="3.300" rx="1.300" fill="#d0d0d0" stroke="#333" stroke-width=".8"/>
</svg>
<svg style="left:1971px;top:502px" width="28" height="33" viewBox="0 0 28 33">
<defs><linearGradient id="lk" x1="0" y1="0" x2="0" y2="1"><stop offset="0" stop-color="#c4b456"/><stop offset=".5" stop-color="#94862c"/><stop offset="1" stop-color="#6a5c0c"/></linearGradient>
<radialGradient id="lk2" cx=".5" cy=".1" r=".9"><stop offset="0" stop-color="#fff" stop-opacity=".12"/><stop offset="1" stop-color="#000" stop-opacity=".22"/></radialGradient></defs>
<path d="M6.600 15.500V11.200a7.400 7.400 0 0 1 14.800 0V15.500" fill="none" stroke="#1e1e1e" stroke-width="5.400"/>
<path d="M6.600 15.500V11.200a7.400 7.400 0 0 1 14.800 0V15.500" fill="none" stroke="#9a9a9a" stroke-width="3.200"/>
<rect x="2.600" y="14.800" width="22.800" height="15.600" rx="1.800" fill="url(#lk)" stroke="#1e1e1e" stroke-width="1.200"/>
<rect x="3.200" y="15.400" width="21.600" height="14.400" rx="1.400" fill="url(#lk2)"/>
</svg>
<div class="a" style="left:22px;top:1251.600px;width:39px;height:24px;border:1.800px solid #d4d4d4;border-top-width:4.500px;background:#000"></div>
<div class="a" style="left:24.500px;top:1253px;width:6px;height:1px;background:repeating-linear-gradient(90deg,#555 0,#555 1.200px,transparent 1.200px,transparent 2.200px)"></div>
<div class="a" style="left:75.500px;top:1251.600px;width:39px;height:24px;border:1.500px solid #5c5c5c;background:#000"></div>
<div class="a" style="left:87px;top:1277.500px;width:16px;height:1.500px;background:#4a4a4a"></div>
<div class="a" style="left:128.9px;top:1251.500px;width:1.300px;height:25px;background:repeating-linear-gradient(180deg,#5a5a5a 0,#5a5a5a 1.300px,transparent 1.300px,transparent 4.700px)"></div>
<div class="a" style="left:254.0px;top:1251.500px;width:1.300px;height:25px;background:repeating-linear-gradient(180deg,#5a5a5a 0,#5a5a5a 1.300px,transparent 1.300px,transparent 4.700px)"></div>
<div class="a" style="left:1304.0px;top:1251.500px;width:1.300px;height:25px;background:repeating-linear-gradient(180deg,#5a5a5a 0,#5a5a5a 1.300px,transparent 1.300px,transparent 4.700px)"></div>
<div class="a" style="left:1402.4px;top:1251.500px;width:1.300px;height:25px;background:repeating-linear-gradient(180deg,#5a5a5a 0,#5a5a5a 1.300px,transparent 1.300px,transparent 4.700px)"></div>
<div class="a" style="left:1589.9px;top:1251.500px;width:1.300px;height:25px;background:repeating-linear-gradient(180deg,#5a5a5a 0,#5a5a5a 1.300px,transparent 1.300px,transparent 4.700px)"></div>
<div class="a" style="left:1785.9px;top:1251.500px;width:1.300px;height:25px;background:repeating-linear-gradient(180deg,#5a5a5a 0,#5a5a5a 1.300px,transparent 1.300px,transparent 4.700px)"></div>
<svg style="left:145px;top:1253px" width="23" height="22" viewBox="0 0 23 22"><g fill="#565656"><rect x="0" y="0" width="9" height="8.600"/><rect x="13.200" y="0" width="9" height="8.600"/><rect x="0" y="12.900" width="9" height="8.600"/><rect x="13.200" y="12.900" width="9" height="8.600"/></g></svg>
<svg style="left:183px;top:1253px" width="20" height="22" viewBox="0 0 20 22"><path d="M0.300 10.600L11 0v6.300h8v8.600h-8v6.300z" fill="#5e5e5e"/></svg>
<svg style="left:218.500px;top:1253px" width="20" height="22" viewBox="0 0 20 22"><path d="M19.200 10.600L8.500 0v6.300h-8v8.600h8v6.300z" fill="#5e5e5e"/></svg>
<svg style="left:763.500px;top:1263.800px" width="9" height="5" viewBox="0 0 9 5"><path d="M0 0h9L4.500 4.800z" fill="#8a8a8a"/></svg>
<svg style="left:1208px;top:1248px" width="84" height="32" viewBox="0 0 84 32">
<g stroke="#4a4a4a" stroke-width="1.200" fill="none">
<path d="M5 13.500L15.500 3L26 13.500L15.500 24z" fill="#3c3c3c"/><path d="M10 18.500L19.500 28.500"/><path d="M1.500 14l2.200 2.500l3.500 -4"/>
<path d="M33 13.500L43 3L53.500 13.500L43 24zM37.500 18.500L47 28.500" stroke-dasharray="1.500 2"/>
<path d="M62 13.500L72 3L82 13.500L72 24zM66.500 18.500L76 28.500"/><path d="M58 11l4.500 4.500M62.500 11L58 15.500"/>
</g></svg>
<svg style="left:1319px;top:1250px" width="72" height="28" viewBox="0 0 72 28">
<g stroke="#4c4c4c" stroke-width="1.400" fill="none">
<path d="M1 5h29M1 13.500h29M1 22h29M7.500 1.500v7M22.500 10v7M14 18.500v7"/>
<path d="M52 3h19M42 12h8M60 12h11M42 21h18M68 21h3M65 8.500v7M55.500 17.500v7M43 0.500L67 26.500"/>
</g></svg>
<svg style="left:1443.2px;top:1252px" width="21.600" height="20.600" viewBox="0 0 20 19"><path d="M10 0l2.500 6.900l7.300 .3l-5.700 4.500l2 7.100l-6.100 -4.100l-6.100 4.100l2 -7.100l-5.700 -4.500l7.300 -.3z" fill="#4b4b4b"/></svg>
<svg style="left:1470.7px;top:1252px" width="21.600" height="20.600" viewBox="0 0 20 19"><path d="M10 0l2.500 6.900l7.300 .3l-5.700 4.500l2 7.100l-6.100 -4.100l-6.100 4.100l2 -7.100l-5.700 -4.500l7.300 -.3z" fill="#4b4b4b"/></svg>
<svg style="left:1498.2px;top:1252px" width="21.600" height="20.600" viewBox="0 0 20 19"><path d="M10 0l2.500 6.900l7.300 .3l-5.700 4.500l2 7.100l-6.100 -4.100l-6.100 4.100l2 -7.100l-5.700 -4.500l7.300 -.3z" fill="#4b4b4b"/></svg>
<svg style="left:1525.8px;top:1252px" width="21.600" height="20.600" viewBox="0 0 20 19"><path d="M10 0l2.500 6.900l7.300 .3l-5.700 4.500l2 7.100l-6.100 -4.100l-6.100 4.100l2 -7.100l-5.700 -4.500l7.300 -.3z" fill="#4b4b4b"/></svg>
<svg style="left:1553.5px;top:1252px" width="21.600" height="20.600" viewBox="0 0 20 19"><path d="M10 0l2.500 6.900l7.300 .3l-5.700 4.500l2 7.100l-6.100 -4.100l-6.100 4.100l2 -7.100l-5.700 -4.500l7.300 -.3z" fill="#4b4b4b"/></svg>
<div class="a" style="left:1607.0px;top:1254.900px;width:17.800px;height:17.600px;background:#7e2e2e"></div>
<div class="a" style="left:1656.4px;top:1254.900px;width:17.800px;height:17.600px;background:#2c6a2e"></div>
<div class="a" style="left:1681.0px;top:1254.900px;width:17.800px;height:17.600px;background:#2c4d80"></div>
<div class="a" style="left:1705.4px;top:1254.900px;width:17.800px;height:17.600px;background:#4a3180"></div>
<div class="a" style="left:1730.0px;top:1254.900px;width:17.800px;height:17.600px;background:#858585"></div>
<div class="a" style="left:1754.9px;top:1254.900px;width:17.800px;height:17.600px;background:#4c4c4c"></div>
<div class="a" style="left:1629.500px;top:1252.300px;width:22.400px;height:22.400px;background:#e2de36;border:1.800px solid #f2f2f2"></div>
<div class="a" style="left:1800px;top:1251.600px;width:211.500px;height:22.500px;background:#1e1e1e;border:1px solid #4e4e4e;box-shadow:inset 0 0 0 1px #0c0c0c"></div>
<div class="a" style="left:1991.500px;top:1253.600px;width:1px;height:18.500px;background:#444"></div>
<svg style="left:1996.500px;top:1257px" width="8" height="12" viewBox="0 0 8 12"><path d="M0.500 4.800L4 0.800L7.500 4.800zM0.500 7.200L4 11.200L7.500 7.200z" fill="#5e5e5e"/></svg>
<div class="a" style="left:2025.500px;top:1252px;width:14.500px;height:21.500px;background:#222;border:1px solid #3c3c3c"></div>
<div class="a" style="left:2027.300px;top:1254px;width:11px;height:7.500px;background:linear-gradient(#8c8c8c,#5c5c5c)"></div>

<span class="t" style="left:742.9px;top:9.3px;font-size:18.7px;font-weight:700;font-style:normal;color:#3c3a3b;transform:scaleX(1.0488);">jessica-ian.lrcat - Adobe Photoshop Lightroom Classic - Develop</span><span class="t" style="left:90.0px;top:62.6px;font-size:17px;font-weight:400;font-style:normal;color:#a9a9a9;transform:scaleX(0.8466);">Adobe Lightroom Classic</span><span class="t" style="left:90.0px;top:79.5px;font-size:24.5px;font-weight:400;font-style:normal;color:#b4b4b4;transform:scaleX(0.9110);">ashley vanderheiden</span><span class="t" style="left:1195.5px;top:78.3px;font-size:30.4px;font-weight:400;font-style:normal;color:#a3a3a3;transform:scaleX(0.9773);">Library</span><span class="t" style="left:1320.7px;top:78.3px;font-size:30.4px;font-weight:400;font-style:normal;color:#ffffff;transform:scaleX(0.9478);">Develop</span><span class="t" style="left:1461.8px;top:78.3px;font-size:30.4px;font-weight:400;font-style:normal;color:#a3a3a3;transform:scaleX(0.9455);">Map</span><span class="t" style="left:1553.4px;top:78.3px;font-size:30.4px;font-weight:400;font-style:normal;color:#a3a3a3;transform:scaleX(0.9368);">Book</span><span class="t" style="left:1651.0px;top:78.3px;font-size:30.4px;font-weight:400;font-style:normal;color:#a3a3a3;transform:scaleX(0.9384);">Slideshow</span><span class="t" style="left:1816.0px;top:78.3px;font-size:30.4px;font-weight:400;font-style:normal;color:#a3a3a3;transform:scaleX(0.9440);">Print</span><span class="t" style="left:1908.0px;top:78.3px;font-size:30.4px;font-weight:400;font-style:normal;color:#a3a3a3;transform:scaleX(0.9136);">Web</span><span class="t" style="left:63.2px;top:167.7px;font-size:40px;font-weight:400;font-style:normal;color:#ffffff;transform:scaleX(0.8152);text-shadow:2px 2.500px 2.500px rgba(0,0,0,.8);-webkit-text-stroke:.35px #fff;">AR1_4117.CR3</span><span class="t" style="left:63.0px;top:220.2px;font-size:28px;font-weight:400;font-style:normal;color:#ffffff;transform:scaleX(0.8766);text-shadow:2px 2.500px 2.500px rgba(0,0,0,.8);-webkit-text-stroke:.35px #fff;"><span style="font-size:15.5px;position:relative;top:-10px">1</span><span style="font-size:28px;margin-left:4px">&#8260;</span><span style="font-size:17px;position:relative;top:3px;margin-left:1px">250</span><span style="margin-left:0px"> sec at <i style="font-family:'Liberation Serif',serif">&#402;</i> / 2.0, ISO 200</span></span><span class="t" style="left:63.0px;top:254.1px;font-size:25.5px;font-weight:400;font-style:normal;color:#ffffff;transform:scaleX(1.0062);text-shadow:2px 2.500px 2.500px rgba(0,0,0,.8);-webkit-text-stroke:.35px #fff;">35 mm (EF35mm f/1.4L II USM)</span><span class="t" style="left:1881.0px;top:139.6px;font-size:21.6px;font-weight:400;font-style:normal;color:#c2c2c2;transform:scaleX(0.9796);text-shadow:0 1px 1px rgba(0,0,0,.55);">Histogram</span><span class="t" style="left:1629.0px;top:324.1px;font-size:16.5px;font-weight:400;font-style:normal;color:#a6a6a6;transform:scaleX(0.8407);">ISO 200</span><span class="t" style="left:1744.4px;top:324.1px;font-size:16.5px;font-weight:400;font-style:normal;color:#a6a6a6;transform:scaleX(0.9100);">35 mm</span><span class="t" style="left:1839.6px;top:324.1px;font-size:16.5px;font-weight:400;font-style:normal;color:#a6a6a6;transform:scaleX(0.9143);"><i style="font-family:'Liberation Serif',serif">&#402;</i> / 2.0</span><span class="t" style="left:1953.3px;top:324.1px;font-size:16.5px;font-weight:400;font-style:normal;color:#a6a6a6;transform:scaleX(0.8090);"><span style="font-size:9.5px;position:relative;top:-6px">1</span><span style="font-size:17px;margin-left:2.5px">&#8260;</span><span style="font-size:10px;position:relative;top:2px;margin-left:.5px">250</span><span> sec</span></span><span class="t" style="left:1649.9px;top:358.0px;font-size:16.5px;font-weight:400;font-style:normal;color:#a6a6a6;transform:scaleX(0.9621);">Original Photo</span><span class="t" style="left:1631.9px;top:462.7px;font-size:16.6px;font-weight:400;font-style:normal;color:#b0b0b0;transform:scaleX(0.9352);text-shadow:0 1px 1px rgba(0,0,0,.55);">Tool :</span><span class="t" style="left:1852.3px;top:463.7px;font-size:15.5px;font-weight:700;font-style:normal;color:#c6c6c6;transform:scaleX(1.0880);text-shadow:0 1px 1px rgba(0,0,0,.55);">Crop &amp; Straighten</span><span class="t" style="left:1674.0px;top:514.0px;font-size:16.6px;font-weight:400;font-style:normal;color:#b8b8b8;transform:scaleX(0.9241);text-shadow:0 1px 1px rgba(0,0,0,.55);">Aspect :</span><span class="t" style="left:1905.8px;top:514.7px;font-size:15.5px;font-weight:400;font-style:normal;color:#a8a8a8;transform:scaleX(0.8063);text-shadow:0 1px 1px rgba(0,0,0,.55);">1 x 1</span><span class="t" style="left:1939.7px;top:563.6px;font-size:15.5px;font-weight:400;font-style:normal;color:#eaeaea;transform:scaleX(1.0599);text-shadow:0 1px 1px rgba(0,0,0,.55);">Auto</span><span class="t" style="left:1674.0px;top:593.6px;font-size:16.6px;font-weight:400;font-style:normal;color:#b8b8b8;transform:scaleX(0.9422);text-shadow:0 1px 1px rgba(0,0,0,.55);">Angle</span><span class="t" style="left:1960.9px;top:594.4px;font-size:15.5px;font-weight:400;font-style:normal;color:#a8a8a8;transform:scaleX(1.0772);text-shadow:0 1px 1px rgba(0,0,0,.55);">0.00</span><span class="t" style="left:1656.6px;top:643.5px;font-size:16.6px;font-weight:400;font-style:normal;color:#c0c0c0;transform:scaleX(0.9415);text-shadow:0 1px 1px rgba(0,0,0,.55);">Constrain to Image</span><span class="t" style="left:1886.3px;top:693.0px;font-size:16.5px;font-weight:400;font-style:normal;color:#a4a4a4;transform:scaleX(0.8815);text-shadow:0 1px 1px rgba(0,0,0,.55);">Reset</span><span class="t" style="left:1958.7px;top:693.0px;font-size:16.5px;font-weight:400;font-style:normal;color:#a4a4a4;transform:scaleX(0.8936);text-shadow:0 1px 1px rgba(0,0,0,.55);">Close</span><span class="t" style="left:1929.7px;top:740.2px;font-size:21.6px;font-weight:400;font-style:normal;color:#c2c2c2;transform:scaleX(0.8824);text-shadow:0 1px 1px rgba(0,0,0,.55);">Basic</span><span class="t" style="left:1871.3px;top:785.7px;font-size:21.6px;font-weight:400;font-style:normal;color:#c2c2c2;transform:scaleX(0.9508);text-shadow:0 1px 1px rgba(0,0,0,.55);">Tone Curve</span><span class="t" style="left:1876.7px;top:832.6px;font-size:21.6px;font-weight:400;font-style:normal;color:#c2c2c2;transform:scaleX(0.9254);text-shadow:0 1px 1px rgba(0,0,0,.55);">HSL<span style="color:#8c8c8c;letter-spacing:-.5px"> / Color</span></span><span class="t" style="left:1847.9px;top:881.7px;font-size:21.6px;font-weight:400;font-style:normal;color:#c2c2c2;transform:scaleX(0.9551);text-shadow:0 1px 1px rgba(0,0,0,.55);">Color Grading</span><span class="t" style="left:1922.0px;top:927.9px;font-size:21.6px;font-weight:400;font-style:normal;color:#c2c2c2;transform:scaleX(0.9834);text-shadow:0 1px 1px rgba(0,0,0,.55);">Detail</span><span class="t" style="left:1821.0px;top:974.6px;font-size:21.6px;font-weight:400;font-style:normal;color:#c2c2c2;transform:scaleX(0.9514);text-shadow:0 1px 1px rgba(0,0,0,.55);">Lens Corrections</span><span class="t" style="left:1882.2px;top:1021.1px;font-size:21.6px;font-weight:400;font-style:normal;color:#c2c2c2;transform:scaleX(0.9642);text-shadow:0 1px 1px rgba(0,0,0,.55);">Transform</span><span class="t" style="left:1916.0px;top:1067.4px;font-size:21.6px;font-weight:400;font-style:normal;color:#c2c2c2;transform:scaleX(0.9189);text-shadow:0 1px 1px rgba(0,0,0,.55);">Effects</span><span class="t" style="left:1875.2px;top:1113.7px;font-size:21.6px;font-weight:400;font-style:normal;color:#c2c2c2;transform:scaleX(0.9793);text-shadow:0 1px 1px rgba(0,0,0,.55);">Calibration</span><span class="t" style="left:1702.8px;top:1196.8px;font-size:19.5px;font-weight:400;font-style:normal;color:#c2c2c2;transform:scaleX(0.8740);text-shadow:0 1px 1px rgba(0,0,0,.55);">Sync...</span><span class="t" style="left:1892.7px;top:1196.8px;font-size:19.5px;font-weight:400;font-style:normal;color:#c2c2c2;transform:scaleX(0.9322);text-shadow:0 1px 1px rgba(0,0,0,.55);">Reset</span><span class="t" style="left:40.8px;top:1200.5px;font-size:16px;font-weight:400;font-style:normal;color:#b4b4b4;transform:scaleX(0.9835);text-shadow:0 1px 1px rgba(0,0,0,.55);">Tool Overlay :</span><span class="t" style="left:148.2px;top:1200.5px;font-size:16px;font-weight:400;font-style:normal;color:#e4e4e4;transform:scaleX(0.9628);text-shadow:0 1px 1px rgba(0,0,0,.55);">Always</span><span class="t" style="left:1534.8px;top:1194.5px;font-size:21.5px;font-weight:400;font-style:normal;color:#c6c6c6;transform:scaleX(0.9046);text-shadow:1px 2px 1.500px rgba(0,0,0,.5);">Done</span><span class="t" style="left:36.5px;top:1257.1px;font-size:19px;font-weight:700;font-style:normal;color:#ffffff;transform:scaleX(1.0000);">1</span><span class="t" style="left:89.5px;top:1256.1px;font-size:19px;font-weight:700;font-style:normal;color:#9a9a9a;transform:scaleX(1.0000);">2</span><span class="t" style="left:270.2px;top:1256.6px;font-size:17px;font-weight:400;font-style:normal;color:#a2a2a2;transform:scaleX(1.0231);">Previous Import</span><span class="t" style="left:422.6px;top:1257.2px;font-size:17px;font-weight:400;font-style:normal;color:#8c8c8c;transform:scaleX(0.9952);">13 of 480 photos /13 selected /</span><span class="t" style="left:657.0px;top:1257.2px;font-size:17px;font-weight:400;font-style:normal;color:#ececec;transform:scaleX(0.8275);">AR1_4117.CR3</span><span class="t" style="left:1148.3px;top:1254.2px;font-size:17px;font-weight:400;font-style:normal;color:#e2e2e2;transform:scaleX(0.9675);">Filter :</span><span class="t" style="left:1421.3px;top:1251.7px;font-size:21px;font-weight:400;font-style:normal;color:#4a4a4a;transform:scaleX(1.0146);">&#8805;</span><span class="t" style="left:1816.6px;top:1255.5px;font-size:16.5px;font-weight:400;font-style:normal;color:#ececec;transform:scaleX(1.0254);text-shadow:0 1px 1px rgba(0,0,0,.55);">Custom Filter</span><span class="t" style="left:37.4px;top:1291.0px;font-size:16.5px;font-weight:700;font-style:normal;color:#8a8a8a;transform:scaleX(1.0000);letter-spacing:-.5px;">1</span><span class="t" style="left:170.8px;top:1291.0px;font-size:16.5px;font-weight:700;font-style:normal;color:#8a8a8a;transform:scaleX(1.0000);letter-spacing:-.5px;">2</span><span class="t" style="left:304.2px;top:1291.0px;font-size:16.5px;font-weight:700;font-style:normal;color:#8a8a8a;transform:scaleX(1.0000);letter-spacing:-.5px;">3</span><span class="t" style="left:437.6px;top:1291.0px;font-size:16.5px;font-weight:700;font-style:normal;color:#8a8a8a;transform:scaleX(1.0000);letter-spacing:-.5px;">4</span><span class="t" style="left:571.0px;top:1291.0px;font-size:16.5px;font-weight:700;font-style:normal;color:#8a8a8a;transform:scaleX(1.0000);letter-spacing:-.5px;">5</span><span class="t" style="left:704.4px;top:1291.0px;font-size:16.5px;font-weight:700;font-style:normal;color:#9a9a9a;transform:scaleX(1.0000);letter-spacing:-.5px;">6</span><span class="t" style="left:837.8px;top:1291.0px;font-size:16.5px;font-weight:700;font-style:normal;color:#8a8a8a;transform:scaleX(1.0000);letter-spacing:-.5px;">7</span><span class="t" style="left:971.2px;top:1291.0px;font-size:16.5px;font-weight:700;font-style:normal;color:#8a8a8a;transform:scaleX(1.0000);letter-spacing:-.5px;">8</span><span class="t" style="left:1104.6px;top:1291.0px;font-size:16.5px;font-weight:700;font-style:normal;color:#8a8a8a;transform:scaleX(1.0000);letter-spacing:-.5px;">9</span><span class="t" style="left:1238.0px;top:1291.0px;font-size:16.5px;font-weight:700;font-style:normal;color:#8a8a8a;transform:scaleX(1.0000);letter-spacing:-.5px;">10</span><span class="t" style="left:1371.4px;top:1291.0px;font-size:16.5px;font-weight:700;font-style:normal;color:#8a8a8a;transform:scaleX(1.0000);letter-spacing:-.5px;">11</span><span class="t" style="left:1504.8px;top:1291.0px;font-size:16.5px;font-weight:700;font-style:normal;color:#8a8a8a;transform:scaleX(1.0000);letter-spacing:-.5px;">12</span><span class="t" style="left:1638.2px;top:1291.0px;font-size:16.5px;font-weight:700;font-style:normal;color:#8a8a8a;transform:scaleX(1.0000);letter-spacing:-.5px;">13</span>
</div>
</body></html>
